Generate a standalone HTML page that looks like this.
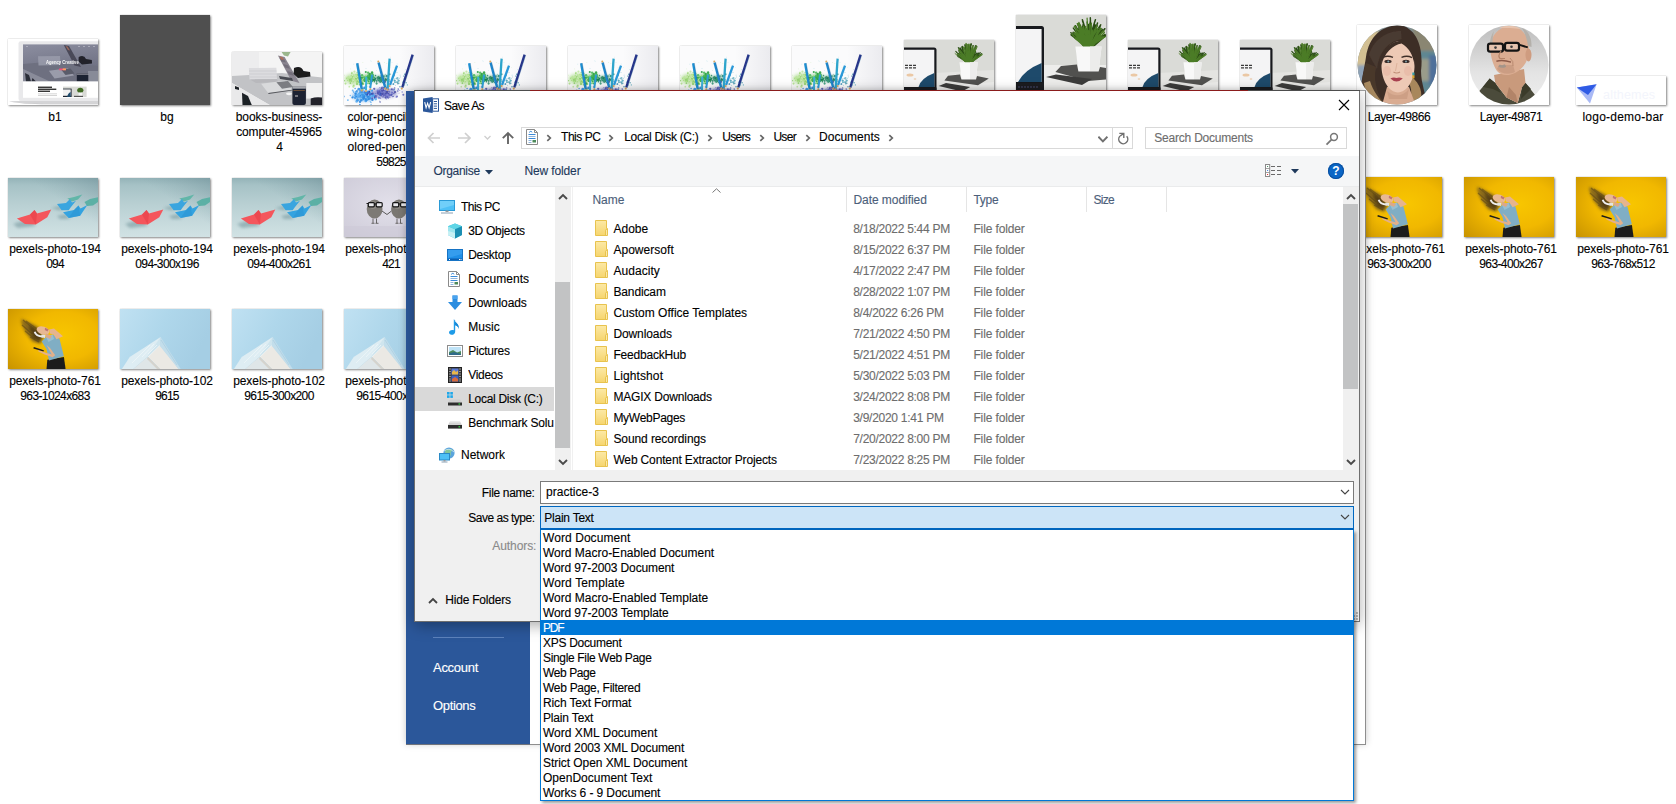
<!DOCTYPE html><html><head><meta charset="utf-8"><title>Save As</title><style>

html,body{margin:0;padding:0}
body{width:1676px;height:804px;overflow:hidden;background:#fff;position:relative;font-family:"Liberation Sans", sans-serif;font-size:12px;color:#000;line-height:15px}
.a{position:absolute}
.th{position:absolute;box-shadow:1px 1px 2px rgba(0,0,0,.45),0 0 1px rgba(0,0,0,.25);background:#fff;overflow:hidden}
.th svg{display:block;width:100%;height:100%}
.lb{position:absolute;width:130px;text-align:center;line-height:15px;font-size:12px;white-space:nowrap}
.lb span{display:inline-block}
.t{position:absolute;white-space:nowrap;line-height:15px;height:15px;-webkit-text-stroke:0.12px}
.lb{-webkit-text-stroke:0.12px}
#lst{-webkit-text-stroke:0.12px}
.g{color:#6d6d6d}
.hd{color:#4c607a}
#lst{position:absolute;left:540px;top:530px;width:812px;height:270px;background:#fff;border:1px solid #0078d7;border-top:0;box-shadow:2px 2px 3px rgba(0,0,0,.4)}
#lst div{position:absolute;left:0;width:810px;height:15px;line-height:15px;padding-left:2px;white-space:nowrap}

</style></head><body>
<svg width="0" height="0" style="position:absolute"><defs>

<linearGradient id="gBoat" x1="0" y1="0" x2="0" y2="1"><stop offset="0" stop-color="#94b3b8"/><stop offset=".12" stop-color="#a6c2c6"/><stop offset=".45" stop-color="#b9d0d3"/><stop offset="1" stop-color="#d1e2e4"/></linearGradient>
<linearGradient id="gBoat2" x1="0" y1="1" x2="1" y2="0"><stop offset="0" stop-color="#7fa0a8" stop-opacity="0"/><stop offset=".6" stop-color="#7fa0a8" stop-opacity="0"/><stop offset="1" stop-color="#6f9098" stop-opacity=".55"/></linearGradient>
<radialGradient id="gYel" cx=".6" cy=".45" r=".8"><stop offset="0" stop-color="#f8c600"/><stop offset=".5" stop-color="#f1b800"/><stop offset="1" stop-color="#c99400"/></radialGradient>
<linearGradient id="gSky" x1="0" y1="0" x2="1" y2=".35"><stop offset="0" stop-color="#c0e1f2"/><stop offset=".5" stop-color="#afd7eb"/><stop offset="1" stop-color="#a5cee4"/></linearGradient>
<radialGradient id="gStone" cx=".5" cy=".45" r=".7"><stop offset="0" stop-color="#e2e0ea"/><stop offset="1" stop-color="#cfccd9"/></radialGradient>
<linearGradient id="gMan" x1="0" y1="0" x2="0" y2="1"><stop offset="0" stop-color="#bcbcbc"/><stop offset=".6" stop-color="#e4e4e4"/><stop offset="1" stop-color="#efefef"/></linearGradient>
<linearGradient id="gHero" x1="0" y1="0" x2=".3" y2="1"><stop offset="0" stop-color="#8c8ea0"/><stop offset="1" stop-color="#6a6c7e"/></linearGradient>
<linearGradient id="gFold" x1="0" y1="0" x2="0" y2="1"><stop offset="0" stop-color="#fce9a6"/><stop offset="1" stop-color="#f6d56e"/></linearGradient>
<linearGradient id="gPenR" x1="0" y1="0" x2="1" y2="0"><stop offset="0" stop-color="#fbfbfc"/><stop offset="1" stop-color="#ebebef"/></linearGradient>
<clipPath id="cW"><circle cx="40" cy="40" r="39.5"/></clipPath>
<filter id="bl0" x="-10%" y="-10%" width="120%" height="120%"><feGaussianBlur stdDeviation="0.35"/></filter>
<filter id="bl1" x="-20%" y="-20%" width="140%" height="140%"><feGaussianBlur stdDeviation="0.6"/></filter>
<filter id="bl2" x="-20%" y="-20%" width="140%" height="140%"><feGaussianBlur stdDeviation="1.4"/></filter>
<filter id="bl3" x="-30%" y="-30%" width="160%" height="160%"><feGaussianBlur stdDeviation="2.5"/></filter>

<g id="b1">
 <rect width="90" height="66" fill="#fff"/>
 <path d="M10.5 4.5Q10.5 2.3 12.7 2.3H90V62H12.7Q10.5 62 10.5 59.8Z" fill="#e9e9eb"/>
  <rect x="15" y="5.4" width="75" height="37" fill="url(#gHero)"/>
 <g filter="url(#bl1)">
  <path d="M15 25L50 22L90 27V42.4H42L15 30Z" fill="#6e7080"/>
  <path d="M15 30L42 42.4H15Z" fill="#8a8c9a"/>
  <path d="M17 34L21 36L23 42.4H18Z" fill="#2c2d38"/>
  <path d="M24.5 39L28 42.4H23.5Z" fill="#2c2d38"/>
  <path d="M30 17.3L52 17L52.5 26L30.5 26.4Z" fill="#9a9cac" opacity=".85"/>
  <path d="M55.8 6L61 7L73 28L66.5 26.5Z" fill="#4a4858"/>
  <path d="M57.5 7L59.5 7.4L62 11.5L60 11Z" fill="#b0705c" opacity=".8"/>
  <path d="M40.9 31.7L60 29.2L66 36.5L46.5 39.5Z" fill="#9a9caa"/>
  <path d="M53 30.5L62.5 29.4L66.5 34.4L57.5 36Z" fill="#5a5c6a"/>
  <path d="M70.7 18Q76 15.5 78 20L83.8 21L84 24.5L74 25.5L70.5 22.5Z" fill="#20212a"/>
  <path d="M68.8 34.5H81V42.4H68.8Z" fill="#1f2230"/>
  <rect x="68.8" y="34.5" width="12.2" height="1.4" fill="#7a7c88"/>
  <rect x="80" y="32" width="10" height="10.4" fill="#9a9ca8" opacity=".6"/>
 </g>
 <rect x="15" y="42.4" width="75" height="16.4" fill="#fff"/>
 <rect x="30" y="47.6" width="14" height="1.3" fill="#222"/><rect x="30" y="49.6" width="18.3" height="1.3" fill="#222"/><rect x="30" y="51.6" width="12" height="1.3" fill="#222"/>
 <rect x="30" y="54.6" width="19" height=".6" fill="#b8b8b8"/><rect x="30" y="56.2" width="19" height=".6" fill="#b8b8b8"/>
 <rect x="55" y="47.6" width="23.6" height="10.4" fill="#d9dad6"/>
 <rect x="55" y="49.6" width="8.6" height="8.4" fill="#1d2430"/><rect x="55" y="50.4" width="7.7" height="6.4" fill="#f1f1f1"/>
 <path d="M59 58Q60 54 62.7 53V58Z" fill="#1e4a6b"/>
 <ellipse cx="72.3" cy="51.3" rx="3.1" ry="2.5" fill="#3f6a22"/><rect x="70.6" y="53.6" width="3.6" height="3.8" fill="#f5f5f5"/>
 <rect x="66" y="56.8" width="9" height="1.2" fill="#555"/>
 <rect x="51" y="29.4" width="7" height="1.8" rx=".5" fill="#ee4f7e"/><rect x="54.6" y="29.4" width="3.4" height="1.8" rx=".5" fill="#f7a45c"/>
 <text x="54.4" y="25" font-family="Liberation Sans, sans-serif" font-size="5" font-weight="bold" fill="#fff" text-anchor="middle" textLength="32.7" lengthAdjust="spacingAndGlyphs" opacity=".95">Agency Creative</text>
 <g fill="#c8c9d2" opacity=".7"><rect x="18" y="7.2" width="2" height=".8"/><rect x="70" y="7.2" width="2" height=".8"/><rect x="75" y="7.2" width="2" height=".8"/><rect x="80" y="7.2" width="2" height=".8"/><rect x="85" y="7.2" width="2" height=".8"/></g>
 <path d="M1 62.2Q12 64.4 45 64.4H90V62H10.5Z" fill="#d4d4d6"/>
 <path d="M1 62.2Q12 64.4 45 64.4H90V65.2H40Q12 65.2 1 62.2Z" fill="#bdbdc0"/>
</g>

<g id="bg"><rect width="90" height="90" fill="#4f4f4f"/></g>

<g id="books">
 <rect width="90" height="53" fill="#f4f4f4"/>
 <rect x="0" y="0" width="27" height="24" fill="#ededee"/>
 <g filter="url(#bl0)">
 <path d="M0 23.9L50 21L90 25.5V53H37.7L0 31Z" fill="#c2c3c6"/>
 <path d="M0 31L37.7 53H0Z" fill="#e9e9ea"/>
 <path d="M10 40.7L16 44L19.8 53H10.5Z" fill="#1e2026"/>
 <path d="M3 34L7 35.5V38L3 37Z" fill="#1e2026"/>
 <path d="M16.8 16L44.4 15.7L45 27L17.5 27.4Z" fill="#dcdcdf"/>
 <path d="M17 19H44.6M17.2 22H44.8M17.4 25H45" stroke="#c9c9cd" stroke-width=".7"/>
 <path d="M18 27.4L45 27L46 30L24 31Z" fill="#b3b4b8" opacity=".7"/>
 <path d="M49.6 0L58.6 0L56 4.5L52 3.5Z" fill="#86a873" opacity=".8"/>
 <path d="M45.9 3.4L52.6 4.9L67.5 31L59.3 28.7Z" fill="#8a8590"/>
 <path d="M47.5 6L52 7L54 10.5L49.5 9.5ZM51 12L56 13.2L58 16.7L53 15.5ZM55 19L60 20.2L62 23.7L57 22.5Z" fill="#6d6874" opacity=".8"/>
 <path d="M47.5 4.4L50.5 5L52 8L49 7.4Z" fill="#b86a50" opacity=".8"/>
 <path d="M29.1 31.7L52.6 28.7L60 37.7L36.2 41Z" fill="#d9dadc"/>
 <path d="M44.4 30.2L56 28.9L61 35L50 36.8Z" fill="#7b7d82"/>
 <path d="M36.2 41L60 37.7L60 38.6L36.6 42Z" fill="#55575c"/>
 <path d="M47 24L60 26L61 29L48 27Z" fill="#4a4c52"/>
 <path d="M62 16Q69 13 71.5 19L78 20L78.5 24.5L66 26L61.6 22Z" fill="#1a1b1f"/>
 <rect x="74.3" y="31" width="15.7" height="15.6" fill="#f1f1f1"/>
 <path d="M60.4 34.7H73.9V51Q73.9 53 72 53H62.3Q60.4 53 60.4 51Z" fill="#1c2230"/>
 <rect x="60.4" y="34.7" width="13.5" height="2" fill="#a8aab0"/>
 <rect x="61.4" y="38" width="11.5" height="1" fill="#7a5a3a" opacity=".8"/>
 <rect x="63" y="43.2" width="3" height="1.6" fill="#8a8c92"/>
 <ellipse cx="57" cy="41.8" rx="3" ry="1.4" fill="#f4f4f4"/>
 <path d="M78.7 46.5Q84 44.5 90 45.5V53H78.7Z" fill="#23242c"/>
 </g>
</g>

<g id="pencils">
 <rect width="90" height="59" fill="#fbfbfc"/>
 <rect x="55" y="0" width="35" height="59" fill="url(#gPenR)"/>
 <g filter="url(#bl1)">
<g filter="url(#bl2)" opacity=".45"><ellipse cx="11" cy="33" rx="11" ry="6" fill="#8fd064"/><ellipse cx="25" cy="32" rx="7" ry="4.5" fill="#2da844"/><ellipse cx="37" cy="33" rx="7" ry="3.5" fill="#167a5a"/><ellipse cx="20" cy="50" rx="12" ry="5.5" fill="#2d8fe6"/><ellipse cx="40" cy="47" rx="13" ry="5" fill="#3a3fa8"/></g><g opacity="0.75"><circle cx="19.4" cy="38.1" r="0.93" fill="#7cc653"/><circle cx="19.1" cy="37.0" r="0.73" fill="#b9e596"/><circle cx="11.7" cy="31.5" r="0.42" fill="#b9e596"/><circle cx="1.0" cy="35.4" r="0.40" fill="#b9e596"/><circle cx="9.8" cy="39.3" r="0.81" fill="#8fd064"/><circle cx="12.3" cy="32.5" r="0.42" fill="#8fd064"/><circle cx="16.9" cy="31.7" r="0.55" fill="#b9e596"/><circle cx="9.8" cy="28.8" r="0.93" fill="#b9e596"/><circle cx="5.3" cy="31.9" r="0.87" fill="#b9e596"/><circle cx="25.2" cy="30.6" r="0.69" fill="#8fd064"/><circle cx="19.0" cy="43.1" r="1.00" fill="#8fd064"/><circle cx="10.4" cy="25.6" r="1.08" fill="#b9e596"/><circle cx="-3.3" cy="32.6" r="0.53" fill="#7cc653"/><circle cx="-0.5" cy="29.2" r="0.99" fill="#b9e596"/><circle cx="9.5" cy="32.5" r="0.57" fill="#b9e596"/><circle cx="7.6" cy="34.1" r="0.78" fill="#7cc653"/><circle cx="19.2" cy="35.7" r="0.48" fill="#a6dc7c"/><circle cx="4.6" cy="32.5" r="0.74" fill="#8fd064"/><circle cx="5.5" cy="33.6" r="0.99" fill="#b9e596"/><circle cx="8.6" cy="31.3" r="0.56" fill="#8fd064"/><circle cx="12.0" cy="28.7" r="1.00" fill="#a6dc7c"/><circle cx="6.1" cy="34.8" r="0.99" fill="#7cc653"/><circle cx="6.0" cy="33.7" r="0.78" fill="#8fd064"/><circle cx="1.5" cy="37.6" r="1.07" fill="#a6dc7c"/><circle cx="2.7" cy="32.5" r="0.70" fill="#8fd064"/><circle cx="4.9" cy="33.4" r="0.79" fill="#b9e596"/><circle cx="4.9" cy="33.3" r="0.64" fill="#7cc653"/><circle cx="9.5" cy="33.2" r="0.56" fill="#a6dc7c"/><circle cx="7.1" cy="32.3" r="0.46" fill="#7cc653"/><circle cx="26.3" cy="34.7" r="0.45" fill="#8fd064"/><circle cx="0.6" cy="34.7" r="0.60" fill="#7cc653"/><circle cx="18.0" cy="36.1" r="0.64" fill="#8fd064"/><circle cx="13.5" cy="35.3" r="1.07" fill="#7cc653"/><circle cx="7.8" cy="30.7" r="0.89" fill="#b9e596"/><circle cx="9.6" cy="33.1" r="0.67" fill="#b9e596"/><circle cx="12.4" cy="30.4" r="0.58" fill="#a6dc7c"/><circle cx="17.7" cy="32.2" r="1.08" fill="#a6dc7c"/><circle cx="14.6" cy="33.2" r="0.90" fill="#a6dc7c"/><circle cx="3.7" cy="34.4" r="0.70" fill="#a6dc7c"/><circle cx="20.1" cy="32.3" r="0.89" fill="#b9e596"/><circle cx="12.6" cy="38.0" r="0.68" fill="#7cc653"/><circle cx="7.3" cy="29.9" r="0.92" fill="#a6dc7c"/><circle cx="24.0" cy="31.6" r="0.61" fill="#8fd064"/><circle cx="5.3" cy="40.7" r="0.92" fill="#b9e596"/><circle cx="7.8" cy="32.3" r="0.79" fill="#8fd064"/><circle cx="7.2" cy="31.7" r="1.03" fill="#b9e596"/><circle cx="17.2" cy="39.2" r="1.08" fill="#8fd064"/><circle cx="6.7" cy="35.2" r="0.54" fill="#b9e596"/><circle cx="4.6" cy="30.8" r="1.06" fill="#b9e596"/><circle cx="8.8" cy="36.9" r="0.63" fill="#b9e596"/><circle cx="12.0" cy="32.6" r="0.54" fill="#7cc653"/><circle cx="14.1" cy="28.8" r="0.49" fill="#b9e596"/><circle cx="13.2" cy="38.1" r="0.99" fill="#7cc653"/><circle cx="21.6" cy="29.6" r="0.77" fill="#a6dc7c"/><circle cx="12.7" cy="33.4" r="0.49" fill="#a6dc7c"/><circle cx="14.8" cy="31.7" r="0.93" fill="#7cc653"/><circle cx="7.0" cy="35.4" r="0.60" fill="#b9e596"/><circle cx="16.4" cy="36.3" r="0.47" fill="#8fd064"/><circle cx="5.7" cy="34.9" r="1.09" fill="#a6dc7c"/><circle cx="13.8" cy="30.2" r="0.83" fill="#b9e596"/><circle cx="18.3" cy="35.0" r="0.80" fill="#7cc653"/><circle cx="7.4" cy="35.2" r="0.77" fill="#8fd064"/><circle cx="5.9" cy="33.7" r="0.95" fill="#7cc653"/><circle cx="20.7" cy="33.4" r="0.46" fill="#8fd064"/><circle cx="16.3" cy="27.5" r="0.53" fill="#b9e596"/><circle cx="14.7" cy="36.3" r="0.88" fill="#a6dc7c"/><circle cx="10.9" cy="31.4" r="1.04" fill="#b9e596"/><circle cx="13.8" cy="28.9" r="0.97" fill="#7cc653"/><circle cx="9.7" cy="30.0" r="0.55" fill="#7cc653"/><circle cx="11.9" cy="33.1" r="1.09" fill="#7cc653"/><circle cx="10.2" cy="30.0" r="0.67" fill="#b9e596"/><circle cx="24.3" cy="36.0" r="1.08" fill="#b9e596"/><circle cx="14.5" cy="34.6" r="0.83" fill="#b9e596"/><circle cx="8.4" cy="30.7" r="0.78" fill="#7cc653"/><circle cx="12.9" cy="36.1" r="0.97" fill="#8fd064"/><circle cx="18.0" cy="32.6" r="0.86" fill="#7cc653"/><circle cx="17.0" cy="31.7" r="0.61" fill="#7cc653"/><circle cx="15.5" cy="38.7" r="0.81" fill="#7cc653"/><circle cx="11.1" cy="34.6" r="0.83" fill="#8fd064"/><circle cx="11.0" cy="33.7" r="0.57" fill="#8fd064"/><circle cx="9.5" cy="40.0" r="0.91" fill="#8fd064"/><circle cx="7.4" cy="30.8" r="0.95" fill="#b9e596"/><circle cx="-1.6" cy="34.3" r="0.47" fill="#7cc653"/><circle cx="25.0" cy="37.0" r="0.52" fill="#a6dc7c"/><circle cx="23.0" cy="32.4" r="0.62" fill="#8fd064"/><circle cx="7.9" cy="26.6" r="0.82" fill="#a6dc7c"/><circle cx="13.8" cy="31.8" r="1.04" fill="#8fd064"/><circle cx="13.2" cy="26.6" r="0.84" fill="#a6dc7c"/><circle cx="14.0" cy="36.4" r="0.51" fill="#a6dc7c"/><circle cx="11.0" cy="34.3" r="1.07" fill="#b9e596"/><circle cx="3.3" cy="31.7" r="1.00" fill="#b9e596"/><circle cx="23.3" cy="33.5" r="0.52" fill="#b9e596"/><circle cx="20.3" cy="33.8" r="0.69" fill="#8fd064"/><circle cx="16.6" cy="34.3" r="0.50" fill="#a6dc7c"/><circle cx="23.0" cy="40.6" r="0.59" fill="#b9e596"/><circle cx="12.3" cy="34.3" r="0.74" fill="#a6dc7c"/><circle cx="3.5" cy="32.3" r="0.85" fill="#b9e596"/><circle cx="19.4" cy="30.9" r="0.56" fill="#7cc653"/><circle cx="3.6" cy="33.1" r="0.56" fill="#b9e596"/><circle cx="6.4" cy="37.1" r="0.91" fill="#7cc653"/><circle cx="15.5" cy="32.6" r="1.05" fill="#7cc653"/><circle cx="17.0" cy="38.0" r="1.02" fill="#7cc653"/><circle cx="9.3" cy="35.8" r="0.79" fill="#a6dc7c"/><circle cx="7.8" cy="27.6" r="0.82" fill="#8fd064"/><circle cx="24.1" cy="27.6" r="0.80" fill="#a6dc7c"/><circle cx="14.8" cy="36.1" r="1.06" fill="#8fd064"/><circle cx="4.5" cy="33.1" r="0.85" fill="#b9e596"/><circle cx="7.1" cy="32.8" r="0.91" fill="#8fd064"/><circle cx="8.2" cy="32.8" r="0.58" fill="#8fd064"/><circle cx="9.4" cy="40.7" r="1.07" fill="#a6dc7c"/></g><g opacity="0.85"><circle cx="34.4" cy="30.3" r="0.55" fill="#2da844"/><circle cx="23.4" cy="33.2" r="1.15" fill="#1f9a3a"/><circle cx="25.0" cy="33.7" r="0.53" fill="#46b85a"/><circle cx="27.3" cy="34.2" r="0.81" fill="#46b85a"/><circle cx="28.0" cy="29.7" r="0.80" fill="#1f9a3a"/><circle cx="16.4" cy="31.9" r="1.20" fill="#1f9a3a"/><circle cx="21.6" cy="32.5" r="0.80" fill="#46b85a"/><circle cx="26.3" cy="33.3" r="0.68" fill="#2da844"/><circle cx="24.0" cy="33.2" r="0.91" fill="#46b85a"/><circle cx="23.8" cy="30.6" r="1.21" fill="#1f9a3a"/><circle cx="24.1" cy="26.6" r="1.11" fill="#46b85a"/><circle cx="18.2" cy="37.6" r="1.27" fill="#2da844"/><circle cx="28.9" cy="31.3" r="1.09" fill="#46b85a"/><circle cx="20.4" cy="31.4" r="1.24" fill="#46b85a"/><circle cx="17.9" cy="31.6" r="1.03" fill="#1f9a3a"/><circle cx="28.6" cy="30.4" r="0.95" fill="#46b85a"/><circle cx="24.2" cy="29.2" r="0.68" fill="#1f9a3a"/><circle cx="28.0" cy="27.6" r="1.20" fill="#46b85a"/><circle cx="24.0" cy="37.5" r="0.75" fill="#46b85a"/><circle cx="27.5" cy="29.2" r="0.91" fill="#46b85a"/><circle cx="22.1" cy="30.9" r="0.67" fill="#46b85a"/><circle cx="20.9" cy="34.8" r="1.21" fill="#1f9a3a"/><circle cx="23.7" cy="26.6" r="0.65" fill="#46b85a"/><circle cx="29.1" cy="34.0" r="0.54" fill="#46b85a"/><circle cx="26.2" cy="37.0" r="0.59" fill="#46b85a"/><circle cx="27.1" cy="33.5" r="1.16" fill="#2da844"/><circle cx="19.4" cy="33.8" r="0.53" fill="#1f9a3a"/><circle cx="23.1" cy="33.5" r="0.52" fill="#2da844"/><circle cx="25.9" cy="31.8" r="1.08" fill="#2da844"/><circle cx="23.5" cy="32.9" r="1.25" fill="#46b85a"/><circle cx="27.5" cy="35.5" r="0.81" fill="#2da844"/><circle cx="25.8" cy="30.2" r="1.28" fill="#2da844"/><circle cx="21.9" cy="34.9" r="1.09" fill="#2da844"/><circle cx="24.0" cy="34.8" r="0.75" fill="#46b85a"/><circle cx="25.7" cy="27.9" r="1.22" fill="#1f9a3a"/><circle cx="29.1" cy="29.0" r="0.88" fill="#2da844"/><circle cx="30.1" cy="34.1" r="1.17" fill="#2da844"/><circle cx="17.3" cy="33.6" r="0.60" fill="#46b85a"/><circle cx="25.9" cy="29.2" r="0.76" fill="#1f9a3a"/><circle cx="24.7" cy="35.4" r="0.84" fill="#2da844"/><circle cx="21.8" cy="26.0" r="1.04" fill="#1f9a3a"/><circle cx="27.3" cy="32.3" r="0.58" fill="#46b85a"/><circle cx="26.0" cy="37.5" r="1.07" fill="#2da844"/><circle cx="27.9" cy="31.9" r="0.86" fill="#1f9a3a"/><circle cx="27.5" cy="32.9" r="1.13" fill="#46b85a"/><circle cx="24.2" cy="30.1" r="0.84" fill="#46b85a"/><circle cx="25.0" cy="30.6" r="0.81" fill="#2da844"/><circle cx="29.9" cy="34.6" r="0.69" fill="#2da844"/><circle cx="31.6" cy="32.5" r="0.58" fill="#2da844"/><circle cx="20.6" cy="31.6" r="0.75" fill="#46b85a"/><circle cx="20.6" cy="34.6" r="1.11" fill="#2da844"/><circle cx="24.4" cy="29.4" r="0.91" fill="#46b85a"/><circle cx="18.1" cy="29.2" r="1.24" fill="#46b85a"/><circle cx="25.7" cy="33.0" r="1.14" fill="#1f9a3a"/><circle cx="35.1" cy="32.8" r="0.59" fill="#1f9a3a"/><circle cx="22.2" cy="38.9" r="0.80" fill="#2da844"/><circle cx="27.9" cy="30.2" r="0.58" fill="#2da844"/><circle cx="28.2" cy="28.9" r="0.51" fill="#1f9a3a"/><circle cx="30.3" cy="33.3" r="0.87" fill="#46b85a"/><circle cx="24.7" cy="31.8" r="0.52" fill="#1f9a3a"/><circle cx="26.5" cy="31.6" r="1.10" fill="#2da844"/><circle cx="27.9" cy="33.6" r="1.07" fill="#2da844"/><circle cx="25.1" cy="29.5" r="0.60" fill="#2da844"/><circle cx="29.0" cy="34.4" r="0.77" fill="#1f9a3a"/><circle cx="30.9" cy="31.0" r="0.52" fill="#46b85a"/><circle cx="23.8" cy="32.1" r="1.06" fill="#1f9a3a"/><circle cx="22.2" cy="34.2" r="1.14" fill="#1f9a3a"/><circle cx="17.0" cy="32.5" r="1.08" fill="#46b85a"/><circle cx="28.1" cy="26.5" r="1.17" fill="#1f9a3a"/><circle cx="23.2" cy="32.9" r="0.98" fill="#46b85a"/></g><g opacity="0.8"><circle cx="37.4" cy="35.5" r="0.70" fill="#0f6e50"/><circle cx="31.1" cy="33.4" r="0.88" fill="#1e8c68"/><circle cx="36.8" cy="34.5" r="1.20" fill="#1e8c68"/><circle cx="31.5" cy="32.4" r="0.72" fill="#167a5a"/><circle cx="37.3" cy="34.1" r="1.14" fill="#1e8c68"/><circle cx="36.6" cy="30.0" r="0.45" fill="#0f6e50"/><circle cx="44.6" cy="33.9" r="1.06" fill="#1e8c68"/><circle cx="29.9" cy="33.5" r="1.10" fill="#0f6e50"/><circle cx="38.1" cy="30.9" r="0.98" fill="#0f6e50"/><circle cx="27.1" cy="34.6" r="1.10" fill="#167a5a"/><circle cx="42.1" cy="33.5" r="0.61" fill="#0f6e50"/><circle cx="31.2" cy="34.1" r="0.64" fill="#0f6e50"/><circle cx="39.9" cy="30.7" r="0.83" fill="#1e8c68"/><circle cx="28.6" cy="30.8" r="0.95" fill="#167a5a"/><circle cx="45.6" cy="28.2" r="0.94" fill="#167a5a"/><circle cx="35.7" cy="31.3" r="0.83" fill="#0f6e50"/><circle cx="30.5" cy="31.7" r="0.57" fill="#0f6e50"/><circle cx="36.8" cy="34.0" r="0.79" fill="#0f6e50"/><circle cx="38.9" cy="32.9" r="1.04" fill="#1e8c68"/><circle cx="37.7" cy="32.8" r="0.74" fill="#1e8c68"/><circle cx="37.9" cy="32.6" r="0.89" fill="#167a5a"/><circle cx="32.7" cy="34.8" r="0.84" fill="#1e8c68"/><circle cx="20.8" cy="32.8" r="0.65" fill="#167a5a"/><circle cx="41.3" cy="34.6" r="1.16" fill="#1e8c68"/><circle cx="36.1" cy="34.5" r="0.95" fill="#1e8c68"/><circle cx="32.6" cy="37.6" r="1.12" fill="#1e8c68"/><circle cx="30.5" cy="35.8" r="0.71" fill="#0f6e50"/><circle cx="36.1" cy="32.2" r="1.18" fill="#0f6e50"/><circle cx="36.1" cy="35.8" r="0.97" fill="#1e8c68"/><circle cx="33.8" cy="33.6" r="0.64" fill="#1e8c68"/><circle cx="41.6" cy="33.1" r="0.86" fill="#167a5a"/><circle cx="32.7" cy="34.9" r="0.51" fill="#0f6e50"/><circle cx="33.5" cy="31.4" r="0.94" fill="#1e8c68"/><circle cx="34.2" cy="32.0" r="0.79" fill="#0f6e50"/><circle cx="43.3" cy="34.1" r="1.17" fill="#1e8c68"/><circle cx="34.4" cy="31.8" r="0.88" fill="#167a5a"/><circle cx="34.4" cy="34.3" r="0.70" fill="#0f6e50"/><circle cx="36.3" cy="36.5" r="0.48" fill="#167a5a"/><circle cx="43.7" cy="32.5" r="0.51" fill="#0f6e50"/><circle cx="38.4" cy="36.6" r="0.59" fill="#167a5a"/><circle cx="34.2" cy="30.4" r="0.48" fill="#0f6e50"/><circle cx="35.2" cy="34.6" r="1.07" fill="#1e8c68"/><circle cx="41.2" cy="28.3" r="0.46" fill="#0f6e50"/><circle cx="31.5" cy="29.6" r="0.76" fill="#167a5a"/><circle cx="37.3" cy="32.5" r="1.17" fill="#1e8c68"/><circle cx="40.0" cy="29.4" r="0.55" fill="#1e8c68"/><circle cx="32.5" cy="36.2" r="0.47" fill="#0f6e50"/><circle cx="35.7" cy="33.9" r="0.63" fill="#1e8c68"/><circle cx="30.8" cy="33.6" r="0.63" fill="#0f6e50"/><circle cx="28.5" cy="35.4" r="0.52" fill="#167a5a"/><circle cx="28.6" cy="33.5" r="0.90" fill="#0f6e50"/><circle cx="26.9" cy="35.0" r="1.14" fill="#167a5a"/><circle cx="41.9" cy="33.4" r="1.00" fill="#0f6e50"/><circle cx="33.3" cy="32.8" r="0.67" fill="#167a5a"/><circle cx="42.7" cy="30.0" r="1.18" fill="#167a5a"/></g><g opacity="0.7"><circle cx="54.2" cy="35.4" r="0.57" fill="#1a8aa6"/><circle cx="54.7" cy="34.3" r="0.65" fill="#1a7a96"/><circle cx="56.1" cy="29.1" r="0.47" fill="#2a9ab6"/><circle cx="49.6" cy="38.0" r="0.80" fill="#1a7a96"/><circle cx="56.0" cy="40.7" r="0.81" fill="#1a7a96"/><circle cx="54.8" cy="32.1" r="0.52" fill="#2a9ab6"/><circle cx="60.8" cy="28.3" r="0.82" fill="#1a7a96"/><circle cx="58.7" cy="36.1" r="0.72" fill="#2a9ab6"/><circle cx="54.0" cy="36.3" r="0.50" fill="#2a9ab6"/><circle cx="54.3" cy="33.7" r="0.51" fill="#2a9ab6"/><circle cx="59.7" cy="30.1" r="0.63" fill="#1a7a96"/><circle cx="51.1" cy="35.1" r="0.60" fill="#1a8aa6"/><circle cx="51.5" cy="39.2" r="0.37" fill="#1a8aa6"/><circle cx="40.5" cy="36.4" r="0.64" fill="#2a9ab6"/><circle cx="50.4" cy="34.5" r="0.90" fill="#1a8aa6"/><circle cx="62.1" cy="36.7" r="0.70" fill="#1a7a96"/><circle cx="53.4" cy="36.8" r="0.76" fill="#1a7a96"/><circle cx="52.2" cy="32.5" r="0.53" fill="#1a8aa6"/><circle cx="53.2" cy="31.7" r="0.67" fill="#1a8aa6"/><circle cx="60.7" cy="38.9" r="0.51" fill="#1a8aa6"/><circle cx="60.0" cy="35.2" r="0.84" fill="#1a7a96"/><circle cx="53.0" cy="26.4" r="0.36" fill="#1a7a96"/><circle cx="53.0" cy="35.6" r="0.71" fill="#2a9ab6"/><circle cx="53.3" cy="32.9" r="0.69" fill="#1a7a96"/><circle cx="53.2" cy="36.2" r="0.68" fill="#1a8aa6"/><circle cx="53.7" cy="34.4" r="0.37" fill="#1a8aa6"/><circle cx="49.2" cy="38.1" r="0.90" fill="#2a9ab6"/><circle cx="63.3" cy="38.9" r="0.58" fill="#1a8aa6"/><circle cx="55.1" cy="34.7" r="0.76" fill="#2a9ab6"/><circle cx="53.0" cy="32.5" r="0.37" fill="#1a7a96"/><circle cx="50.9" cy="32.7" r="0.37" fill="#2a9ab6"/><circle cx="50.4" cy="43.8" r="0.71" fill="#1a8aa6"/><circle cx="51.1" cy="34.3" r="0.58" fill="#1a8aa6"/><circle cx="54.8" cy="37.2" r="0.71" fill="#1a7a96"/><circle cx="56.3" cy="30.9" r="0.37" fill="#1a7a96"/><circle cx="53.9" cy="37.7" r="0.77" fill="#1a7a96"/><circle cx="55.5" cy="32.8" r="0.38" fill="#1a7a96"/><circle cx="42.8" cy="30.3" r="0.57" fill="#2a9ab6"/><circle cx="50.0" cy="29.6" r="0.76" fill="#1a7a96"/><circle cx="50.8" cy="36.1" r="0.86" fill="#2a9ab6"/><circle cx="61.3" cy="30.0" r="0.54" fill="#2a9ab6"/><circle cx="45.5" cy="35.2" r="0.52" fill="#1a7a96"/><circle cx="48.3" cy="33.2" r="0.73" fill="#1a7a96"/><circle cx="51.9" cy="36.5" r="0.62" fill="#1a7a96"/><circle cx="59.8" cy="32.9" r="0.37" fill="#2a9ab6"/></g><g opacity="0.85"><circle cx="12.3" cy="46.0" r="1.22" fill="#2d8fe6"/><circle cx="26.0" cy="44.9" r="0.72" fill="#2d8fe6"/><circle cx="22.6" cy="49.0" r="0.92" fill="#3a9bee"/><circle cx="17.8" cy="51.1" r="0.72" fill="#3a9bee"/><circle cx="16.5" cy="51.2" r="1.28" fill="#5aaef2"/><circle cx="26.2" cy="55.3" r="0.62" fill="#5aaef2"/><circle cx="20.3" cy="50.1" r="1.28" fill="#3a9bee"/><circle cx="22.4" cy="41.2" r="0.65" fill="#3a9bee"/><circle cx="15.9" cy="58.7" r="0.99" fill="#3a9bee"/><circle cx="27.1" cy="58.4" r="0.68" fill="#5aaef2"/><circle cx="18.1" cy="53.2" r="0.65" fill="#3a9bee"/><circle cx="19.5" cy="53.1" r="1.24" fill="#2d8fe6"/><circle cx="11.6" cy="46.9" r="0.56" fill="#1f7fdc"/><circle cx="23.1" cy="46.4" r="0.78" fill="#5aaef2"/><circle cx="16.0" cy="50.4" r="0.73" fill="#2d8fe6"/><circle cx="25.8" cy="49.0" r="0.86" fill="#5aaef2"/><circle cx="14.3" cy="53.4" r="0.51" fill="#2d8fe6"/><circle cx="17.6" cy="45.3" r="1.36" fill="#2d8fe6"/><circle cx="20.5" cy="41.9" r="1.35" fill="#1f7fdc"/><circle cx="6.3" cy="49.4" r="0.73" fill="#5aaef2"/><circle cx="28.4" cy="53.7" r="1.22" fill="#1f7fdc"/><circle cx="35.3" cy="51.9" r="0.58" fill="#1f7fdc"/><circle cx="13.9" cy="49.7" r="0.63" fill="#1f7fdc"/><circle cx="27.3" cy="48.0" r="0.78" fill="#1f7fdc"/><circle cx="16.0" cy="55.9" r="1.06" fill="#1f7fdc"/><circle cx="23.9" cy="50.0" r="0.54" fill="#5aaef2"/><circle cx="30.5" cy="51.1" r="0.81" fill="#1f7fdc"/><circle cx="13.5" cy="51.0" r="0.55" fill="#2d8fe6"/><circle cx="21.9" cy="47.0" r="0.69" fill="#3a9bee"/><circle cx="12.2" cy="45.5" r="0.60" fill="#5aaef2"/><circle cx="18.4" cy="50.9" r="0.88" fill="#3a9bee"/><circle cx="-3.7" cy="53.9" r="1.27" fill="#5aaef2"/><circle cx="29.6" cy="48.7" r="0.79" fill="#1f7fdc"/><circle cx="18.3" cy="53.4" r="0.63" fill="#5aaef2"/><circle cx="23.5" cy="46.1" r="0.66" fill="#5aaef2"/><circle cx="22.8" cy="48.4" r="0.94" fill="#1f7fdc"/><circle cx="30.7" cy="52.4" r="0.82" fill="#2d8fe6"/><circle cx="20.4" cy="46.7" r="1.13" fill="#1f7fdc"/><circle cx="22.6" cy="47.6" r="1.38" fill="#1f7fdc"/><circle cx="25.7" cy="49.1" r="0.66" fill="#2d8fe6"/><circle cx="8.9" cy="51.0" r="0.79" fill="#1f7fdc"/><circle cx="8.4" cy="51.5" r="1.08" fill="#1f7fdc"/><circle cx="14.6" cy="54.1" r="1.16" fill="#5aaef2"/><circle cx="12.6" cy="55.4" r="1.28" fill="#5aaef2"/><circle cx="36.1" cy="48.7" r="0.97" fill="#3a9bee"/><circle cx="22.0" cy="53.1" r="1.27" fill="#1f7fdc"/><circle cx="16.3" cy="44.8" r="1.16" fill="#3a9bee"/><circle cx="8.7" cy="44.5" r="0.96" fill="#5aaef2"/><circle cx="17.3" cy="54.2" r="1.28" fill="#1f7fdc"/><circle cx="19.7" cy="49.2" r="0.64" fill="#5aaef2"/><circle cx="17.1" cy="48.4" r="1.18" fill="#3a9bee"/><circle cx="18.7" cy="49.3" r="0.92" fill="#3a9bee"/><circle cx="26.9" cy="56.4" r="0.60" fill="#3a9bee"/><circle cx="11.9" cy="50.5" r="0.87" fill="#1f7fdc"/><circle cx="13.5" cy="53.3" r="1.03" fill="#3a9bee"/><circle cx="18.7" cy="46.7" r="0.82" fill="#1f7fdc"/><circle cx="28.0" cy="44.5" r="1.12" fill="#1f7fdc"/><circle cx="28.0" cy="49.0" r="0.77" fill="#1f7fdc"/><circle cx="14.3" cy="49.1" r="1.02" fill="#1f7fdc"/><circle cx="22.8" cy="46.7" r="1.23" fill="#1f7fdc"/><circle cx="16.3" cy="50.4" r="0.84" fill="#5aaef2"/><circle cx="36.4" cy="47.6" r="1.05" fill="#1f7fdc"/><circle cx="24.1" cy="45.4" r="0.84" fill="#1f7fdc"/><circle cx="11.8" cy="48.1" r="0.63" fill="#5aaef2"/><circle cx="3.9" cy="54.1" r="0.94" fill="#5aaef2"/><circle cx="26.3" cy="49.4" r="1.37" fill="#3a9bee"/><circle cx="15.8" cy="48.5" r="1.38" fill="#5aaef2"/><circle cx="20.0" cy="50.7" r="1.35" fill="#1f7fdc"/><circle cx="14.7" cy="50.1" r="0.93" fill="#2d8fe6"/><circle cx="11.1" cy="42.5" r="0.72" fill="#2d8fe6"/><circle cx="22.4" cy="43.6" r="0.51" fill="#1f7fdc"/><circle cx="20.3" cy="54.0" r="0.53" fill="#5aaef2"/><circle cx="19.6" cy="52.0" r="1.39" fill="#1f7fdc"/><circle cx="-0.3" cy="50.5" r="0.97" fill="#2d8fe6"/><circle cx="23.4" cy="50.2" r="0.75" fill="#1f7fdc"/><circle cx="12.0" cy="46.3" r="0.52" fill="#1f7fdc"/><circle cx="13.1" cy="54.4" r="1.03" fill="#2d8fe6"/><circle cx="28.2" cy="50.1" r="1.12" fill="#2d8fe6"/><circle cx="26.2" cy="47.2" r="0.51" fill="#5aaef2"/><circle cx="11.8" cy="47.0" r="1.36" fill="#5aaef2"/><circle cx="27.9" cy="44.8" r="0.93" fill="#3a9bee"/><circle cx="25.9" cy="47.7" r="1.18" fill="#1f7fdc"/><circle cx="25.2" cy="45.4" r="0.89" fill="#1f7fdc"/><circle cx="15.6" cy="46.8" r="0.78" fill="#3a9bee"/><circle cx="11.9" cy="50.6" r="0.95" fill="#1f7fdc"/><circle cx="13.3" cy="49.1" r="0.99" fill="#2d8fe6"/><circle cx="24.3" cy="51.1" r="1.24" fill="#2d8fe6"/><circle cx="19.2" cy="49.3" r="1.15" fill="#2d8fe6"/><circle cx="30.1" cy="49.9" r="0.54" fill="#2d8fe6"/><circle cx="21.8" cy="54.9" r="1.36" fill="#3a9bee"/><circle cx="30.2" cy="49.8" r="0.89" fill="#3a9bee"/><circle cx="14.8" cy="47.7" r="0.65" fill="#3a9bee"/><circle cx="23.0" cy="50.5" r="0.84" fill="#2d8fe6"/><circle cx="18.4" cy="54.5" r="0.61" fill="#5aaef2"/><circle cx="22.5" cy="48.7" r="0.89" fill="#1f7fdc"/><circle cx="17.0" cy="46.3" r="0.82" fill="#1f7fdc"/><circle cx="23.0" cy="49.0" r="0.77" fill="#1f7fdc"/><circle cx="27.0" cy="47.6" r="1.06" fill="#1f7fdc"/><circle cx="24.4" cy="51.0" r="1.25" fill="#1f7fdc"/><circle cx="16.5" cy="49.8" r="0.71" fill="#1f7fdc"/><circle cx="13.8" cy="51.0" r="0.62" fill="#2d8fe6"/><circle cx="18.5" cy="48.8" r="1.10" fill="#2d8fe6"/><circle cx="25.0" cy="46.9" r="0.91" fill="#5aaef2"/><circle cx="25.3" cy="47.2" r="0.79" fill="#2d8fe6"/><circle cx="13.8" cy="49.1" r="1.26" fill="#5aaef2"/><circle cx="18.1" cy="47.7" r="0.60" fill="#5aaef2"/><circle cx="21.5" cy="48.3" r="1.06" fill="#1f7fdc"/><circle cx="22.8" cy="47.5" r="1.34" fill="#1f7fdc"/><circle cx="21.8" cy="46.7" r="1.15" fill="#1f7fdc"/><circle cx="13.0" cy="44.9" r="0.89" fill="#1f7fdc"/><circle cx="11.3" cy="49.5" r="1.02" fill="#3a9bee"/><circle cx="17.7" cy="51.0" r="0.53" fill="#3a9bee"/><circle cx="22.5" cy="53.8" r="1.34" fill="#1f7fdc"/><circle cx="27.3" cy="50.0" r="1.30" fill="#5aaef2"/><circle cx="16.8" cy="53.5" r="0.67" fill="#3a9bee"/><circle cx="31.8" cy="53.1" r="1.28" fill="#5aaef2"/><circle cx="22.9" cy="52.2" r="0.75" fill="#3a9bee"/><circle cx="20.0" cy="44.8" r="0.53" fill="#2d8fe6"/><circle cx="13.9" cy="54.8" r="0.78" fill="#2d8fe6"/><circle cx="16.3" cy="45.2" r="0.92" fill="#3a9bee"/><circle cx="27.1" cy="53.5" r="0.76" fill="#3a9bee"/><circle cx="19.5" cy="47.9" r="0.68" fill="#2d8fe6"/><circle cx="11.5" cy="47.7" r="1.06" fill="#1f7fdc"/><circle cx="18.2" cy="48.0" r="0.83" fill="#2d8fe6"/><circle cx="18.9" cy="44.5" r="0.65" fill="#3a9bee"/><circle cx="22.0" cy="52.1" r="0.54" fill="#5aaef2"/><circle cx="19.2" cy="47.2" r="0.92" fill="#5aaef2"/><circle cx="21.2" cy="46.5" r="0.54" fill="#1f7fdc"/><circle cx="29.6" cy="47.9" r="0.71" fill="#5aaef2"/><circle cx="26.1" cy="52.2" r="1.11" fill="#2d8fe6"/><circle cx="8.7" cy="50.1" r="0.54" fill="#5aaef2"/><circle cx="11.2" cy="51.7" r="1.29" fill="#3a9bee"/><circle cx="23.3" cy="53.8" r="0.86" fill="#3a9bee"/><circle cx="24.9" cy="51.5" r="0.60" fill="#3a9bee"/><circle cx="9.6" cy="46.0" r="0.69" fill="#2d8fe6"/><circle cx="14.3" cy="51.2" r="0.88" fill="#5aaef2"/><circle cx="16.6" cy="49.7" r="0.51" fill="#1f7fdc"/><circle cx="14.8" cy="43.2" r="1.40" fill="#2d8fe6"/><circle cx="24.8" cy="53.1" r="1.20" fill="#1f7fdc"/><circle cx="22.4" cy="47.3" r="0.62" fill="#2d8fe6"/></g><g opacity="0.75"><circle cx="44.0" cy="40.7" r="0.79" fill="#2f3498"/><circle cx="44.4" cy="47.5" r="0.87" fill="#2f3498"/><circle cx="39.3" cy="47.7" r="0.79" fill="#4a4fb8"/><circle cx="39.0" cy="43.4" r="0.83" fill="#3a3fa8"/><circle cx="43.6" cy="51.2" r="1.04" fill="#2f3498"/><circle cx="34.3" cy="42.9" r="0.47" fill="#6a70cc"/><circle cx="38.2" cy="48.3" r="1.04" fill="#2f3498"/><circle cx="36.7" cy="47.5" r="0.56" fill="#2f3498"/><circle cx="42.0" cy="47.6" r="1.12" fill="#2f3498"/><circle cx="24.9" cy="47.6" r="0.55" fill="#3a3fa8"/><circle cx="36.0" cy="45.0" r="0.74" fill="#2f3498"/><circle cx="37.1" cy="46.2" r="1.10" fill="#4a4fb8"/><circle cx="48.8" cy="50.5" r="0.65" fill="#4a4fb8"/><circle cx="35.9" cy="48.7" r="0.88" fill="#3a3fa8"/><circle cx="41.8" cy="49.0" r="0.92" fill="#2f3498"/><circle cx="33.1" cy="50.0" r="0.63" fill="#6a70cc"/><circle cx="47.9" cy="48.2" r="1.00" fill="#6a70cc"/><circle cx="47.1" cy="49.1" r="1.04" fill="#3a3fa8"/><circle cx="49.3" cy="43.7" r="1.11" fill="#6a70cc"/><circle cx="41.7" cy="43.7" r="0.46" fill="#6a70cc"/><circle cx="27.7" cy="48.0" r="0.73" fill="#3a3fa8"/><circle cx="44.3" cy="51.9" r="0.76" fill="#4a4fb8"/><circle cx="49.9" cy="47.5" r="0.60" fill="#2f3498"/><circle cx="43.6" cy="50.8" r="0.66" fill="#2f3498"/><circle cx="58.2" cy="46.1" r="0.74" fill="#6a70cc"/><circle cx="39.0" cy="50.9" r="0.78" fill="#4a4fb8"/><circle cx="38.3" cy="43.0" r="0.91" fill="#6a70cc"/><circle cx="34.8" cy="51.6" r="1.18" fill="#6a70cc"/><circle cx="37.8" cy="44.4" r="0.92" fill="#6a70cc"/><circle cx="39.4" cy="45.0" r="1.06" fill="#3a3fa8"/><circle cx="25.3" cy="40.7" r="0.55" fill="#3a3fa8"/><circle cx="36.8" cy="43.9" r="1.19" fill="#6a70cc"/><circle cx="41.7" cy="46.0" r="0.55" fill="#2f3498"/><circle cx="33.7" cy="44.6" r="1.03" fill="#6a70cc"/><circle cx="45.2" cy="48.2" r="0.70" fill="#4a4fb8"/><circle cx="37.5" cy="44.6" r="0.65" fill="#3a3fa8"/><circle cx="37.5" cy="45.9" r="0.48" fill="#6a70cc"/><circle cx="23.3" cy="48.7" r="0.90" fill="#4a4fb8"/><circle cx="26.5" cy="41.7" r="0.53" fill="#2f3498"/><circle cx="54.2" cy="42.9" r="0.76" fill="#3a3fa8"/><circle cx="41.1" cy="45.2" r="1.15" fill="#6a70cc"/><circle cx="31.5" cy="47.5" r="0.85" fill="#6a70cc"/><circle cx="39.3" cy="45.8" r="1.04" fill="#2f3498"/><circle cx="35.7" cy="55.1" r="0.47" fill="#2f3498"/><circle cx="36.1" cy="56.0" r="0.74" fill="#2f3498"/><circle cx="43.3" cy="47.3" r="1.05" fill="#4a4fb8"/><circle cx="38.0" cy="46.8" r="0.54" fill="#2f3498"/><circle cx="59.3" cy="48.7" r="0.99" fill="#4a4fb8"/><circle cx="37.8" cy="43.9" r="0.46" fill="#3a3fa8"/><circle cx="36.5" cy="48.1" r="0.99" fill="#3a3fa8"/><circle cx="45.2" cy="49.3" r="1.18" fill="#4a4fb8"/><circle cx="35.5" cy="46.7" r="0.63" fill="#4a4fb8"/><circle cx="24.4" cy="46.7" r="1.04" fill="#4a4fb8"/><circle cx="35.7" cy="41.8" r="0.50" fill="#4a4fb8"/><circle cx="41.2" cy="35.9" r="0.85" fill="#3a3fa8"/><circle cx="42.4" cy="42.6" r="0.55" fill="#2f3498"/><circle cx="46.0" cy="43.6" r="0.41" fill="#4a4fb8"/><circle cx="37.6" cy="42.1" r="1.04" fill="#2f3498"/><circle cx="39.3" cy="49.2" r="0.52" fill="#4a4fb8"/><circle cx="37.9" cy="47.8" r="0.43" fill="#3a3fa8"/><circle cx="49.5" cy="50.6" r="0.48" fill="#2f3498"/><circle cx="37.7" cy="46.3" r="0.58" fill="#6a70cc"/><circle cx="41.6" cy="51.5" r="1.14" fill="#2f3498"/><circle cx="42.7" cy="47.8" r="0.86" fill="#3a3fa8"/><circle cx="45.8" cy="51.5" r="0.50" fill="#3a3fa8"/><circle cx="38.5" cy="44.9" r="0.95" fill="#3a3fa8"/><circle cx="40.0" cy="41.7" r="0.98" fill="#2f3498"/><circle cx="39.8" cy="49.5" r="1.05" fill="#4a4fb8"/><circle cx="39.8" cy="47.6" r="0.82" fill="#2f3498"/><circle cx="40.6" cy="45.5" r="0.88" fill="#3a3fa8"/><circle cx="32.1" cy="51.1" r="0.58" fill="#3a3fa8"/><circle cx="32.1" cy="51.1" r="0.67" fill="#3a3fa8"/><circle cx="38.9" cy="47.7" r="0.67" fill="#6a70cc"/><circle cx="55.0" cy="47.1" r="0.47" fill="#2f3498"/><circle cx="40.5" cy="48.8" r="0.84" fill="#4a4fb8"/><circle cx="47.8" cy="46.5" r="0.88" fill="#6a70cc"/><circle cx="45.5" cy="45.8" r="0.64" fill="#3a3fa8"/><circle cx="43.1" cy="50.6" r="1.05" fill="#3a3fa8"/><circle cx="53.8" cy="45.0" r="0.81" fill="#3a3fa8"/><circle cx="44.6" cy="49.9" r="0.79" fill="#6a70cc"/><circle cx="42.5" cy="51.9" r="0.71" fill="#6a70cc"/><circle cx="50.7" cy="42.0" r="0.67" fill="#2f3498"/><circle cx="37.2" cy="49.6" r="0.87" fill="#2f3498"/><circle cx="42.3" cy="53.0" r="0.54" fill="#6a70cc"/><circle cx="30.2" cy="42.8" r="1.14" fill="#3a3fa8"/><circle cx="42.8" cy="50.4" r="1.00" fill="#4a4fb8"/><circle cx="20.3" cy="45.9" r="0.82" fill="#6a70cc"/><circle cx="54.6" cy="43.6" r="0.66" fill="#6a70cc"/><circle cx="47.8" cy="43.2" r="1.04" fill="#3a3fa8"/><circle cx="39.8" cy="48.0" r="0.87" fill="#4a4fb8"/><circle cx="44.0" cy="43.2" r="1.03" fill="#3a3fa8"/><circle cx="53.0" cy="50.4" r="1.00" fill="#4a4fb8"/><circle cx="37.2" cy="48.7" r="0.98" fill="#4a4fb8"/><circle cx="42.3" cy="49.0" r="0.90" fill="#6a70cc"/><circle cx="39.4" cy="43.1" r="0.49" fill="#4a4fb8"/><circle cx="26.1" cy="48.7" r="0.86" fill="#4a4fb8"/><circle cx="51.0" cy="46.1" r="1.13" fill="#2f3498"/><circle cx="40.0" cy="45.8" r="0.92" fill="#6a70cc"/><circle cx="48.8" cy="46.8" r="0.45" fill="#2f3498"/><circle cx="42.9" cy="46.0" r="1.15" fill="#2f3498"/><circle cx="52.2" cy="51.0" r="0.70" fill="#4a4fb8"/><circle cx="30.7" cy="51.3" r="1.00" fill="#3a3fa8"/><circle cx="55.8" cy="44.5" r="0.52" fill="#6a70cc"/><circle cx="28.2" cy="52.3" r="1.15" fill="#4a4fb8"/><circle cx="36.0" cy="43.4" r="0.46" fill="#3a3fa8"/><circle cx="35.7" cy="48.4" r="0.83" fill="#4a4fb8"/><circle cx="34.3" cy="48.0" r="0.83" fill="#2f3498"/><circle cx="36.6" cy="52.1" r="0.62" fill="#3a3fa8"/><circle cx="33.9" cy="47.0" r="1.19" fill="#3a3fa8"/><circle cx="25.5" cy="45.9" r="0.85" fill="#2f3498"/><circle cx="41.0" cy="47.8" r="0.41" fill="#4a4fb8"/><circle cx="35.3" cy="46.0" r="0.62" fill="#2f3498"/><circle cx="38.2" cy="41.6" r="1.11" fill="#4a4fb8"/><circle cx="38.7" cy="44.9" r="0.40" fill="#2f3498"/><circle cx="33.4" cy="45.5" r="0.78" fill="#4a4fb8"/><circle cx="23.4" cy="48.1" r="0.90" fill="#3a3fa8"/><circle cx="38.1" cy="45.8" r="0.74" fill="#4a4fb8"/><circle cx="35.1" cy="45.2" r="0.91" fill="#3a3fa8"/><circle cx="28.6" cy="47.6" r="1.07" fill="#2f3498"/><circle cx="28.7" cy="46.3" r="0.69" fill="#6a70cc"/><circle cx="40.0" cy="45.4" r="1.01" fill="#6a70cc"/><circle cx="43.8" cy="45.7" r="0.62" fill="#2f3498"/><circle cx="49.3" cy="38.0" r="0.45" fill="#3a3fa8"/><circle cx="47.9" cy="48.4" r="0.47" fill="#2f3498"/><circle cx="38.3" cy="48.0" r="0.97" fill="#2f3498"/><circle cx="31.8" cy="50.0" r="1.08" fill="#3a3fa8"/><circle cx="39.6" cy="44.2" r="0.80" fill="#2f3498"/><circle cx="44.7" cy="45.4" r="0.41" fill="#3a3fa8"/><circle cx="41.6" cy="42.7" r="0.70" fill="#4a4fb8"/><circle cx="42.4" cy="42.1" r="1.09" fill="#3a3fa8"/></g><g opacity="0.6"><circle cx="36.2" cy="23.1" r="0.41" fill="#9ad67a"/><circle cx="42.9" cy="17.6" r="0.40" fill="#9ad67a"/><circle cx="55.6" cy="21.5" r="0.27" fill="#9ad67a"/><circle cx="35.0" cy="19.3" r="0.39" fill="#9ad67a"/><circle cx="26.5" cy="14.2" r="0.27" fill="#7cc8d8"/><circle cx="50.1" cy="21.3" r="0.39" fill="#9ad67a"/><circle cx="37.9" cy="23.2" r="0.28" fill="#7cc8d8"/><circle cx="18.9" cy="16.6" r="0.28" fill="#9ad67a"/><circle cx="26.9" cy="25.4" r="0.27" fill="#9ad67a"/><circle cx="27.1" cy="15.2" r="0.38" fill="#7cc8d8"/><circle cx="6.8" cy="22.9" r="0.34" fill="#9ad67a"/><circle cx="46.4" cy="11.1" r="0.31" fill="#7cc8d8"/><circle cx="9.8" cy="18.1" r="0.43" fill="#7cc8d8"/><circle cx="35.5" cy="18.5" r="0.38" fill="#9ad67a"/><circle cx="40.4" cy="16.6" r="0.37" fill="#9ad67a"/><circle cx="45.9" cy="19.4" r="0.39" fill="#7cc8d8"/><circle cx="32.5" cy="24.7" r="0.37" fill="#7cc8d8"/><circle cx="46.0" cy="21.1" r="0.32" fill="#9ad67a"/><circle cx="61.7" cy="23.5" r="0.41" fill="#7cc8d8"/><circle cx="36.8" cy="25.8" r="0.42" fill="#9ad67a"/><circle cx="53.1" cy="18.0" r="0.40" fill="#7cc8d8"/><circle cx="63.9" cy="23.7" r="0.28" fill="#9ad67a"/><circle cx="13.2" cy="28.0" r="0.37" fill="#9ad67a"/><circle cx="22.0" cy="22.4" r="0.47" fill="#7cc8d8"/><circle cx="48.0" cy="16.3" r="0.35" fill="#7cc8d8"/></g>
 </g>
 <g fill="none" filter="url(#bl0)">
  <path d="M13.1 17.2L17.7 43.5" stroke="#1e8fd2" stroke-width="2.3"/>
  <path d="M22.3 30.8L22 44" stroke="#3cb0da" stroke-width="2"/>
  <path d="M28.1 28.7L26.3 42.2" stroke="#2e9ed8" stroke-width="2"/>
  <path d="M34.5 16.5L41.1 41.5" stroke="#1f86cc" stroke-width="2.3"/>
  <path d="M45.6 12.7L43.6 42.6" stroke="#2fa5cc" stroke-width="2.3"/>
  <path d="M53 19.7L46 39" stroke="#2b98d8" stroke-width="2.3"/>
  <path d="M68.6 8.6L58.2 41.5" stroke="#27348a" stroke-width="2.3"/>
  <path d="M14.2 17L18.8 43.3M35.6 16.2L42.2 41.2M69.7 9L59.3 41.8" stroke="#0d4f86" stroke-width=".6" opacity=".5"/>
 </g>
 <g fill="#d8a662"><circle cx="17.8" cy="44.4" r="1.1"/><circle cx="22" cy="45" r="1"/><circle cx="26.2" cy="43.2" r="1"/><circle cx="41.3" cy="42.5" r="1.1"/><circle cx="43.5" cy="43.6" r="1.1"/><circle cx="45.7" cy="39.9" r="1"/><circle cx="57.8" cy="42.6" r="1.1"/><circle cx="34.3" cy="15.6" r="1"/></g>
</g>

<g id="laptop">
 <rect width="90" height="65" fill="#dadbd7"/>
 <path d="M0 34H90V65H0Z" fill="#ededeb"/>
 <path d="M30 33L90 30V42L30 47Z" fill="#e4e4e1"/>
 <path d="M0 7.5H30Q32.5 7.5 32.5 10V65H0Z" fill="#17191d"/>
 <path d="M0 9.8H30.3V47H0Z" fill="#f4f4f5"/>
 <path d="M14.5 47Q17 38 30.3 33V47Z" fill="#1e4a6b"/>
 <path d="M0 47.5H32.5V65H0Z" fill="#1c1d21"/>
 <path d="M1 25.3H4M5 25.3H8M9 25.3H12M1 27.8H4M5 27.8H8M9 27.8H12" stroke="#3a3a3a" stroke-width="1.3"/>
 <ellipse cx="6" cy="35" rx="3.5" ry="1.6" fill="#e8b98a" opacity=".75"/><ellipse cx="11" cy="39" rx="1.3" ry=".8" fill="#e8b98a" opacity=".7"/>
 <g filter="url(#bl0)"><path d="M66.6 23.5L62.8 6.4M62.9 23.5L64.8 5.7M62.5 23.5L69.3 5.5M65.5 23.5L52.7 12.7M64.6 23.5L58.0 15.7M62.2 23.5L57.3 13.6M64.3 23.5L64.5 4.8M63.4 23.5L59.7 11.4M66.2 23.5L71.6 11.6M62.0 23.5L77.1 14.0M66.9 23.5L74.3 14.5M65.9 23.5L53.5 14.1M62.5 23.5L56.3 15.1M64.8 23.5L71.2 13.8M63.1 23.5L55.3 14.1M63.1 23.5L51.8 11.4M63.5 23.5L71.5 12.2M66.8 23.5L60.5 8.5M62.9 23.5L67.5 3.8M63.2 23.5L76.3 12.6M64.1 23.5L74.7 13.0M65.0 23.5L56.1 7.8M62.3 23.5L54.7 10.7M65.1 23.5L66.9 3.7M62.1 23.5L72.9 16.1M62.9 23.5L63.1 11.2M65.5 23.5L76.2 15.5M66.3 23.5L61.3 4.7M65.7 23.5L70.8 10.9M64.4 23.5L53.3 15.5M64.9 23.5L73.5 14.3M63.4 23.5L72.5 6.0M63.1 23.5L63.1 9.1M62.4 23.5L74.9 16.4M65.5 23.5L71.5 16.1M62.1 23.5L57.7 6.8M66.1 23.5L63.4 11.5M65.1 23.5L57.6 15.8M64.4 23.5L69.2 11.6M65.6 23.5L53.9 16.6M65.5 23.5L58.4 11.2M65.3 23.5L74.7 15.4M62.4 23.5L72.9 13.9M64.4 23.5L66.5 4.4M66.0 23.5L70.8 14.8M62.7 23.5L58.5 6.3M66.7 23.5L74.9 15.3M66.2 23.5L69.0 8.1M66.8 23.5L54.7 8.9M64.7 23.5L66.5 10.1M66.8 23.5L67.0 12.0M64.8 23.5L60.7 4.8M64.7 23.5L68.8 12.8M63.3 23.5L77.6 13.6M65.9 23.5L72.5 16.6M65.4 23.5L57.4 13.6M63.3 23.5L54.9 13.4M63.9 23.5L65.5 7.4M66.4 23.5L54.3 7.6M63.3 23.5L56.1 9.0M65.9 23.5L73.0 12.9M62.1 23.5L61.0 5.9M66.8 23.5L71.4 5.6M62.5 23.5L58.1 14.8M64.8 23.5L66.2 6.8M63.6 23.5L63.0 4.3M65.0 23.5L65.0 7.3M62.9 23.5L71.8 6.6M63.0 23.5L71.1 10.9M65.1 23.5L72.0 6.6" stroke="#2a4c15" stroke-width="1.1" fill="none" stroke-linecap="round"/><path d="M65.3 23.5L78.1 14.3M64.6 23.5L62.1 3.8M66.2 23.5L78.4 14.7M66.8 23.5L55.4 15.3M62.7 23.5L54.9 10.2M63.5 23.5L77.0 14.6M66.3 23.5L56.9 12.1M63.2 23.5L54.0 13.9M63.0 23.5L73.3 6.8M63.2 23.5L51.1 13.6M63.8 23.5L66.4 10.7M62.1 23.5L57.7 15.9M62.1 23.5L72.2 5.6M63.6 23.5L63.8 4.4M65.7 23.5L54.1 14.5M66.0 23.5L72.3 8.6M66.5 23.5L59.3 6.8M64.9 23.5L68.2 9.1M67.0 23.5L53.6 13.9M62.4 23.5L62.1 3.9M65.1 23.5L70.5 9.4M63.5 23.5L59.4 14.1M66.5 23.5L57.9 13.8M63.6 23.5L62.1 3.3M66.0 23.5L56.5 12.1M66.2 23.5L55.1 13.2M63.6 23.5L68.5 8.1M66.0 23.5L69.0 6.7M64.0 23.5L68.7 5.5M66.7 23.5L72.1 16.5M65.1 23.5L55.3 13.6M66.4 23.5L60.4 7.4M65.2 23.5L72.3 7.3M66.9 23.5L54.6 8.4M63.6 23.5L66.0 4.0M66.2 23.5L65.1 4.4M63.5 23.5L56.5 10.9M66.2 23.5L59.1 10.2M66.1 23.5L55.4 13.8M63.0 23.5L63.8 8.5M62.5 23.5L59.6 7.3M63.0 23.5L65.3 10.0M66.3 23.5L69.0 8.0M65.7 23.5L72.3 14.6M63.6 23.5L73.4 15.2M64.5 23.5L64.7 4.0M66.2 23.5L57.4 14.0M62.3 23.5L72.3 16.8M66.5 23.5L64.8 11.3M66.9 23.5L67.8 7.6" stroke="#4c7c27" stroke-width="0.88" fill="none" stroke-linecap="round"/></g>
 <path d="M55.5 22.3H73.8L71.8 40H57.6Z" fill="#f8f8f8"/>
 <path d="M66 22.3H73.8L71.8 40H66Z" fill="#ececeb"/>
 <path d="M44 35.8L56 34.5L57.4 39.5H72L73 36L84.8 38.5L74 45.2L40.4 40.5Z" fill="#51514f"/>
 <path d="M34.7 46L42 43L66.2 47L58 51.5Z" fill="#3c3c3b"/>
</g>

<g id="laptopT">
 <rect width="90" height="90" fill="#dadbd7"/>
 <path d="M0 50H90V90H0Z" fill="#ededeb"/>
 <path d="M0 11H25.5Q28 11 28 13.5V90H0Z" fill="#17191d"/>
 <path d="M0 14H25.6V67H0Z" fill="#f4f4f5"/>
 <path d="M2 67Q8 55 25.6 48V67Z" fill="#1e4a6b"/>
 <path d="M0 68H28V90H0Z" fill="#1c1d21"/>
 <path d="M2 72H23M2 76H23M2 80H23" stroke="#3a3c55" stroke-width="1.6" stroke-dasharray="2 1"/>
 <g filter="url(#bl0)"><path d="M73.7 33.0L71.2 7.1M74.9 33.0L66.0 13.2M72.6 33.0L54.9 17.8M69.8 33.0L91.1 19.7M73.4 33.0L61.0 19.8M73.2 33.0L68.3 11.7M71.5 33.0L88.6 21.0M69.8 33.0L81.2 10.7M74.7 33.0L66.6 11.3M72.0 33.0L55.1 19.8M70.4 33.0L58.5 21.3M71.5 33.0L57.4 13.1M69.0 33.0L84.7 9.9M70.7 33.0L82.0 16.7M70.6 33.0L85.6 15.7M71.0 33.0L79.5 16.4M71.4 33.0L84.0 14.8M71.7 33.0L74.4 5.5M69.9 33.0L74.5 7.9M70.7 33.0L80.3 14.3M70.0 33.0L64.3 10.2M69.2 33.0L85.5 21.6M73.7 33.0L70.4 14.1M75.6 33.0L63.3 16.6M70.4 33.0L67.2 14.2M74.3 33.0L61.7 14.7M75.8 33.0L80.5 10.3M74.1 33.0L79.4 14.3M71.1 33.0L72.5 10.9M70.8 33.0L61.6 14.7M75.6 33.0L82.5 18.2M75.3 33.0L66.6 6.0M73.3 33.0L82.8 16.4M71.7 33.0L68.6 12.0M70.4 33.0L81.8 19.4M69.2 33.0L59.1 11.8M70.3 33.0L65.6 16.7M73.5 33.0L83.9 16.0M71.9 33.0L77.9 12.8M75.5 33.0L80.1 15.9M69.4 33.0L82.1 20.7M69.0 33.0L62.2 23.3M75.7 33.0L89.1 19.9M72.3 33.0L59.4 10.7M72.8 33.0L82.1 15.5M75.6 33.0L89.6 20.8M71.4 33.0L86.2 14.4M72.4 33.0L88.9 13.8M71.5 33.0L78.0 10.7M69.9 33.0L67.1 9.5M70.8 33.0L88.9 19.5M73.4 33.0L57.1 17.4M73.0 33.0L74.8 8.4M76.0 33.0L65.3 14.5M70.2 33.0L72.6 9.6M71.6 33.0L62.5 17.6M73.5 33.0L67.9 10.5M70.2 33.0L88.8 21.5M70.6 33.0L61.9 9.6M73.1 33.0L78.9 9.7M75.6 33.0L86.6 21.7M74.1 33.0L62.2 14.5M74.0 33.0L79.9 10.6M75.3 33.0L66.4 4.8M71.2 33.0L84.2 17.9M69.3 33.0L69.6 16.2M71.6 33.0L86.8 20.3M75.4 33.0L62.8 13.8M69.1 33.0L78.5 12.4M74.9 33.0L74.8 9.1M74.6 33.0L82.3 23.1M70.5 33.0L79.4 4.8M73.6 33.0L81.5 8.0M69.8 33.0L65.9 18.1M73.2 33.0L84.1 24.3M70.6 33.0L88.8 13.8M74.3 33.0L84.3 11.0M70.2 33.0L82.2 15.3M69.6 33.0L77.4 12.9M73.0 33.0L69.1 12.6M75.4 33.0L74.3 2.7M75.6 33.0L84.1 20.0M75.7 33.0L63.8 19.6M70.4 33.0L79.2 12.2M73.7 33.0L86.7 20.4M70.2 33.0L80.4 11.3M70.4 33.0L70.6 14.4M72.0 33.0L80.3 12.4M72.8 33.0L77.6 16.1" stroke="#2a4c15" stroke-width="1.5" fill="none" stroke-linecap="round"/><path d="M70.9 33.0L58.8 23.3M72.9 33.0L80.9 11.6M70.1 33.0L60.3 18.3M69.5 33.0L55.6 18.6M70.2 33.0L78.5 18.2M74.1 33.0L68.8 17.0M71.7 33.0L62.3 16.0M70.2 33.0L58.6 18.9M71.4 33.0L59.9 23.1M72.4 33.0L71.1 3.0M75.9 33.0L57.0 20.7M71.2 33.0L72.6 15.6M70.8 33.0L71.4 7.5M71.0 33.0L83.3 21.9M72.6 33.0L61.2 8.6M69.9 33.0L81.0 10.3M72.0 33.0L69.5 13.6M75.5 33.0L75.4 8.2M73.1 33.0L82.2 15.6M69.1 33.0L82.3 13.3M75.3 33.0L88.5 17.2M75.6 33.0L66.9 14.0M74.3 33.0L63.8 10.4M72.5 33.0L59.1 11.1M73.3 33.0L60.5 17.5M75.0 33.0L62.9 14.9M74.9 33.0L58.4 17.3M69.4 33.0L87.3 21.7M71.5 33.0L88.0 15.7M75.1 33.0L66.1 17.1M70.1 33.0L60.5 24.5M69.7 33.0L86.1 17.1M72.7 33.0L74.1 10.2M75.7 33.0L86.5 16.1M73.3 33.0L69.4 11.3M73.3 33.0L57.8 17.4M73.3 33.0L64.8 19.1M73.2 33.0L62.2 8.2M72.4 33.0L60.0 24.1M71.3 33.0L85.0 22.2M70.7 33.0L78.1 17.1M74.0 33.0L71.0 11.4M75.3 33.0L66.7 18.4M69.8 33.0L66.1 16.8M73.2 33.0L67.3 11.2M75.0 33.0L61.9 20.2M72.9 33.0L88.3 17.7M74.9 33.0L76.7 15.0M69.5 33.0L66.8 12.8M74.9 33.0L73.6 8.4M72.7 33.0L85.4 13.5M70.2 33.0L87.3 21.5M73.0 33.0L78.5 14.6M73.6 33.0L63.0 7.4M74.7 33.0L61.0 17.4M72.1 33.0L89.8 21.2M75.7 33.0L66.8 17.9M72.4 33.0L61.7 23.5M75.9 33.0L84.4 13.1M71.3 33.0L59.7 15.6M75.4 33.0L58.2 11.4" stroke="#4c7c27" stroke-width="1.20" fill="none" stroke-linecap="round"/></g>
 <path d="M59.4 31.5H85.6L82.6 56.6H62.4Z" fill="#f8f8f8"/>
 <path d="M74 31.5H85.6L82.6 56.6H74Z" fill="#ececeb"/>
 <path d="M45 51L61 49.5L62.4 56.6H82.6L84 52L90 53V64.5L72 66L39.4 57Z" fill="#51514f"/>
 <path d="M30 62L40 59.5L76 64L66 70Z" fill="#3c3c3b"/>
</g>


<g id="woman">
 <rect width="80" height="80" fill="#fff"/>
 <g clip-path="url(#cW)">
  <rect width="80" height="80" fill="#7f8f92"/>
  <g filter="url(#bl2)">
   <rect x="-4" y="6" width="26" height="40" fill="#d2bf92"/>
   <rect x="0" y="40" width="14" height="20" fill="#8fa3b8"/>
   <rect x="56" y="0" width="28" height="30" fill="#8a8672"/>
   <rect x="58" y="26" width="26" height="54" fill="#5f8792"/>
   <rect x="62" y="34" width="10" height="22" fill="#9a9c8a"/>
   <rect x="72" y="30" width="10" height="30" fill="#4f6f9a"/>
  </g>
  <g filter="url(#bl1)">
   <path d="M44 0C24 0 12 12 9 32C7 46 3 58 4 72L10 84H70C70 70 64 60 64 46C66 30 64 6 44 0Z" fill="#3d2e28"/>
   <path d="M9 38C5 52 3 62 6 76L20 84L30 80C20 72 16 56 19 42Z" fill="#4a382c"/>
   <path d="M7 58C8 68 12 75 20 80L30 82C22 74 16 66 13 56Z" fill="#a88a60"/>
   <path d="M53 50C60 56 66 64 64 74L58 82H48C56 74 56 62 50 56Z" fill="#a8875c"/>
   <path d="M24 84L30 62H52L60 84Z" fill="#d9ac92"/>
   <path d="M41 16C30 19 24 29 24.5 42C25 56 32 67 41 67.5C50 67 57 56 57.5 42C58 29 52 19 41 16Z" fill="#edc9b5"/><ellipse cx="30" cy="46" rx="4" ry="5" fill="#e6b6a4" opacity=".6"/><ellipse cx="51" cy="46" rx="4" ry="5" fill="#e6b6a4" opacity=".6"/>
   <path d="M24.5 40C23 28 30 17 44.6 15.5C55 17 59 28 57.5 40C56 30 52 22.5 44.6 18.5C36 20 27 28 24.5 40Z" fill="#3d2e28"/>
   <path d="M12 30C16 16 28 6 44 6L44.6 14C32 16 22 26 20 44Z" fill="#4a3a30"/>
   <path d="M30 66C36 72 46 72 52 64L50 74H32Z" fill="#c79a80" opacity=".7"/>
  </g>
  <ellipse cx="31" cy="36.4" rx="3.6" ry="1.7" fill="#3a2c2a"/><ellipse cx="49" cy="36.4" rx="3.6" ry="1.7" fill="#3a2c2a"/>
  <circle cx="31.3" cy="36.5" r="1" fill="#7fa0a8"/><circle cx="49" cy="36.5" r="1" fill="#7fa0a8"/>
  <path d="M25.5 32.6Q30.5 30 36 32.4M44.5 32.4Q50 30 55 32.6" stroke="#3d2e28" stroke-width="1.3" fill="none"/>
  <path d="M33.4 53.4Q36.5 52 39.5 53Q42.5 52 45.8 53.4Q39.5 59.5 33.4 53.4Z" fill="#a8404f"/>
  <path d="M36.5 47Q39.5 49 43 47" stroke="#c08f78" stroke-width="1.2" fill="none"/>
  <path d="M40 38L38.5 46" stroke="#ddb29c" stroke-width="1" fill="none"/>
  <rect x="55.3" y="47.5" width="2.2" height="3" fill="#3aa0a8"/><rect x="55.3" y="50.3" width="2.2" height="3" fill="#d9a630"/>
 </g>
</g>

<g id="man">
 <rect width="80" height="80" fill="#fff"/>
 <g clip-path="url(#cW)">
  <rect width="80" height="80" fill="url(#gMan)"/>
  <g filter="url(#bl1)">
   <path d="M9.5 67L20.7 53.5L26.3 58L37.5 72.6L48.7 78L53 62.5L56.5 58L65.5 69.2L72 84H4Z" fill="#4b4c3a"/>
   <path d="M25 50L55 44L56.5 58L53 62.5L48.7 78L37.5 72.6L26.3 58Z" fill="#c99a7c"/>
   <path d="M40 62L47 70L48.7 78L37.5 72.6Z" fill="#a87a60" opacity=".7"/>
   <path d="M20.7 53.5L26.3 58L32 68L24 64L14 62Z" fill="#3a3b2c"/>
   <path d="M53 62.5L56.5 58L62 64L52 74Z" fill="#3a3b2c"/>
   <path d="M40 1.5C52 1 60 10 60 24C60 36 54 44 46 48C40 51 32 51 28 46C24 40 21 30 21.5 22C22 10 30 2 40 1.5Z" fill="#dbad92"/>
   <path d="M53 3C60 6 63 14 62.5 22L59 21C58 14 56 8 53 3Z" fill="#b4b0aa"/>
   <path d="M25 6C22 10 20.5 16 21 21L23.5 19C23.5 14 24 10 25 6Z" fill="#b8b2aa"/>
   <ellipse cx="59.5" cy="30" rx="3" ry="6.5" fill="#cf9c80"/>
   <path d="M30 3C36 0 46 0 52 4C46 3 36 3 30 3Z" fill="#e8c4ae"/>
   <path d="M28 44C32 49 40 50 46 47L44 40H30Z" fill="#c0927a" opacity=".6"/>
  </g>
  <path d="M49.8 19.6L58.8 22.4" stroke="#151515" stroke-width="2" fill="none"/>
  <rect x="19" y="18.6" width="15" height="8" rx="2.2" fill="#e5c3ae" stroke="#141414" stroke-width="2.2"/>
  <rect x="36" y="17.9" width="14" height="7.8" rx="2.2" fill="#e5c3ae" stroke="#141414" stroke-width="2.2"/>
  <path d="M34 21.5H36" stroke="#141414" stroke-width="1.8"/>
  <circle cx="26.5" cy="22.6" r="1.3" fill="#3a3a3a"/><circle cx="42.5" cy="21.8" r="1.3" fill="#3a3a3a"/>
  <path d="M27.4 36.2Q34 34.4 42 37.2" stroke="#8c5a48" stroke-width="1.4" fill="none"/>
  <path d="M30 40.5Q33 42.5 36.5 40.5" stroke="#9a938c" stroke-width="2.6" fill="none" opacity=".8"/>
  <path d="M32 26Q28.5 31 31 33.5H36" stroke="#b58468" stroke-width="1.2" fill="none"/>
  <path d="M41 33Q45 36 44 41" stroke="#b98a70" stroke-width="1" fill="none"/>
 </g>
</g>

<g id="logo">
 <rect width="90" height="29" fill="#fff"/>
 <path d="M0.8 11.4L20.6 8.2L14 27.6Z" fill="#a9b9f5"/>
 <path d="M0.8 11.4L20.6 8.2L12 19Z" fill="#2f5be5"/>
 <text x="27" y="23" font-family="Liberation Sans, sans-serif" font-size="12.5" fill="#f3f5fc" letter-spacing=".2">althemes</text>
</g>

<g id="boats">
 <rect width="90" height="59" fill="url(#gBoat)"/>
 <rect width="90" height="59" fill="url(#gBoat2)"/>
 <g filter="url(#bl2)" opacity=".55">
  <path d="M5 46L20 41L28 48L10 50Z" fill="#6f9298"/>
  <path d="M43 30L52 28L54 33Z" fill="#6f9298"/>
  <path d="M49 38L58 36L62 41L52 41Z" fill="#6f9298"/>
 </g>
 <path d="M59.3 20.5L66 19L74.3 16.6L70 21.5L64 23.5Z" fill="#62b6a8"/>
 <path d="M76.5 24L82 21L90 19.2V24L85 27.5L79 28Z" fill="#5cb0a5"/>
 <path d="M49 26L58 25L62 21L64 24.5L68 22.8L63 29L60.7 32.2H53.6Z" fill="#3aa5df"/>
 <path d="M55 34.2L66 32L70.5 27.5L72.5 30.5L79.4 27L75 33.5L72.2 37.8L60.7 40Z" fill="#34a3e0"/>
 <path d="M60.7 40L66 32L70.5 27.5L72.2 37.8Z" fill="#2b94d2" opacity=".6"/>
 <path d="M8.9 40.4L22 36.5L26.5 32L29 35.5L43.3 31.4L39.3 39.3L27.8 46.4L17 46.1Z" fill="#f4565c"/>
 <path d="M22 36.5L26.5 32L29 35.5L27.8 46.4Z" fill="#e8434c" opacity=".7"/>
</g>

<g id="stones">
 <rect width="90" height="59" fill="url(#gStone)"/>
 <rect x="0" y="48" width="90" height="11" fill="#cbc8d6" opacity=".5"/>
 <g filter="url(#bl1)">
 <ellipse cx="30.6" cy="31" rx="7.9" ry="9.6" fill="#7d7a75"/>
 <ellipse cx="55" cy="31" rx="7.9" ry="9.6" fill="#7a7772"/>
 <ellipse cx="29" cy="27" rx="4.5" ry="4" fill="#96938c" opacity=".7"/>
 <ellipse cx="53.5" cy="27" rx="4.5" ry="4" fill="#96938c" opacity=".7"/>
 </g>
 <path d="M38 33L43 36.5L47.5 33" stroke="#4b4a48" stroke-width=".9" fill="none"/>
 <path d="M29 40.5V45M32.5 40.5V45M53 40.5V45M56.5 40.5V45" stroke="#4b4a48" stroke-width=".8"/>
 <path d="M27.5 45.3H30.5M31.5 45.3H34.5M51.5 45.3H54.5M55.5 45.3H58.5" stroke="#4b4a48" stroke-width=".8"/>
 <rect x="24.3" y="24.6" width="6" height="4.2" rx="1" fill="#e9e9ec" stroke="#151515" stroke-width="1.2"/>
 <rect x="32.2" y="24.6" width="6" height="4.2" rx="1" fill="#e9e9ec" stroke="#151515" stroke-width="1.2"/>
 <rect x="48.7" y="24.6" width="6" height="4.2" rx="1" fill="#e9e9ec" stroke="#151515" stroke-width="1.2"/>
 <rect x="56.6" y="24.6" width="6" height="4.2" rx="1" fill="#e9e9ec" stroke="#151515" stroke-width="1.2"/>
 <path d="M30.3 26H32.2M54.7 26H56.6M22.5 25.5H24.3M62.6 25.5H64.5" stroke="#151515" stroke-width="1"/>
</g>

<g id="yellow">
 <rect width="90" height="60" fill="url(#gYel)"/>
 <g filter="url(#bl2)">
  <path d="M13.2 9.7L24.5 15L30.6 18.5L36 26L35 30L32.4 35L24.5 32.4L17.6 23.7L13.7 15Z" fill="#6a5220" opacity=".75"/>
  <path d="M20 16L30 21L34 28L31 33L25 29Z" fill="#4a3616" opacity=".85"/>
 </g>
 <g filter="url(#bl1)">
  <path d="M15 11L26 20M14 16L24 25M18 12L29 20M17 22L27 30M22 28L31 33" stroke="#5a4418" stroke-width="1.2" opacity=".55" fill="none"/>
 </g>
 <g filter="url(#bl0)">
 <path d="M39.3 50.7L55.9 48L57.6 60H38.5Z" fill="#1f1e1b"/>
 <path d="M33.7 32.4L38 28L44.6 25.4L51.5 29.8L55.9 47.2L41 51.5L38.5 40.2Z" fill="#80aec4"/>
 <path d="M38 28L44.6 25.4L46 30L40.5 33Z" fill="#a2c6d6" opacity=".7"/>
 <path d="M41 20.5L46 19.5L55 27.2L48.5 30.2L45.5 25.5L42 24.5Z" fill="#e6b48e"/>
 <ellipse cx="35" cy="21.5" rx="6.6" ry="3.9" transform="rotate(18 35 21.5)" fill="#e8b893"/>
 <path d="M37 18.8L40.5 20.2L39.5 22.5L36.8 21Z" fill="#b5646a" opacity=".8"/>
 <path d="M38 24.5L44 27L42 30L37.5 28Z" fill="#dba888"/>
 <path d="M26.7 22.8Q28 27.5 35 27.4" stroke="#efefef" stroke-width="2" fill="none"/>
 <path d="M33.5 25.5L37.5 26L37 29L33 28.3Z" fill="#e3e3e3"/>
 <path d="M30.6 41L37.6 43.7L47.2 46.3L44.6 48.2L36.7 45.6L30.4 42.6Z" fill="#e3b08a"/>
 <path d="M38.5 36L42 39L47.2 46.3L44 46Z" fill="#e3b08a"/>
 <path d="M25.8 38L35.9 41.3L35.5 42.6L25.4 39.4Z" fill="#1b1b1b"/>
 </g>
</g>

<g id="bld">
 <rect width="90" height="60" fill="url(#gSky)"/>
 <g filter="url(#bl0)">
 <path d="M40.6 28L39.8 36.7L27.2 48L13.2 60H1.9L9.7 48L24.5 38.5Z" fill="#deedf3"/>
 <path d="M40.6 28L39.8 36.7L27.2 48L33 39Z" fill="#cfe5ee"/>
 <path d="M34 35L22 48M30 36L12 54M37 36L28 45" stroke="#eef6f9" stroke-width="1" opacity=".8"/>
 <path d="M40.6 28L60.7 60H58.5L39.8 36.7Z" fill="#c3deeb"/>
 <path d="M41 31L57 56" stroke="#a9cde0" stroke-width=".9" opacity=".8"/>
 <path d="M39.8 36.7L58.5 60H40.2L28 48Z" fill="#ebe9e4"/>
 <path d="M27.2 48L40.2 60H13.2Z" fill="#dfe6e8"/>
 <path d="M28 48L40.2 60H37L27 50Z" fill="#d5d3cd"/>
 <path d="M39.8 36.7L28 48" stroke="#f6f5f2" stroke-width=".8"/>
 </g>
</g>

</defs></svg>
<div class="th" style="left:8px;top:39px;width:90px;height:66px"><svg viewBox="0 0 90 66" preserveAspectRatio="none"><use href="#b1"/></svg></div>
<div class="lb" style="left:-10px;top:110px"><span style="">b1</span></div>
<div class="th" style="left:120px;top:15px;width:90px;height:90px"><svg viewBox="0 0 90 90" preserveAspectRatio="none"><use href="#bg"/></svg></div>
<div class="lb" style="left:102px;top:110px"><span style="">bg</span></div>
<div class="th" style="left:232px;top:52px;width:90px;height:53px"><svg viewBox="0 0 90 53" preserveAspectRatio="none"><use href="#books"/></svg></div>
<div class="lb" style="left:214px;top:110px"><span style="letter-spacing:-0.052px;">books-business-</span><br><span style="letter-spacing:-0.121px;">computer-45965</span><br><span style="letter-spacing:-1.174px;">4</span></div>
<div class="th" style="left:344px;top:46px;width:90px;height:59px"><svg viewBox="0 0 90 59" preserveAspectRatio="none"><use href="#pencils"/></svg></div>
<div class="lb" style="left:326px;top:110px"><span style="letter-spacing:-0.100px;">color-pencils-dra</span><br><span style="letter-spacing:0.420px;">wing-coloring-c</span><br><span style="letter-spacing:0.101px;">olored-pencils-1</span><br><span style="letter-spacing:-0.774px;">59825</span></div>
<div class="th" style="left:456px;top:46px;width:90px;height:59px"><svg viewBox="0 0 90 59" preserveAspectRatio="none"><use href="#pencils"/></svg></div>
<div class="th" style="left:568px;top:46px;width:90px;height:59px"><svg viewBox="0 0 90 59" preserveAspectRatio="none"><use href="#pencils"/></svg></div>
<div class="th" style="left:680px;top:46px;width:90px;height:59px"><svg viewBox="0 0 90 59" preserveAspectRatio="none"><use href="#pencils"/></svg></div>
<div class="th" style="left:792px;top:46px;width:90px;height:59px"><svg viewBox="0 0 90 59" preserveAspectRatio="none"><use href="#pencils"/></svg></div>
<div class="th" style="left:904px;top:40px;width:90px;height:65px"><svg viewBox="0 0 90 65" preserveAspectRatio="none"><use href="#laptop"/></svg></div>
<div class="th" style="left:1016px;top:15px;width:90px;height:90px"><svg viewBox="0 0 90 90" preserveAspectRatio="none"><use href="#laptopT"/></svg></div>
<div class="th" style="left:1128px;top:40px;width:90px;height:65px"><svg viewBox="0 0 90 65" preserveAspectRatio="none"><use href="#laptop"/></svg></div>
<div class="th" style="left:1240px;top:40px;width:90px;height:65px"><svg viewBox="0 0 90 65" preserveAspectRatio="none"><use href="#laptop"/></svg></div>
<div class="th" style="left:1357px;top:25px;width:80px;height:80px"><svg viewBox="0 0 80 80" preserveAspectRatio="none"><use href="#woman"/></svg></div>
<div class="lb" style="left:1334px;top:110px"><span style="letter-spacing:-0.462px;">Layer-49866</span></div>
<div class="th" style="left:1469px;top:25px;width:80px;height:80px"><svg viewBox="0 0 80 80" preserveAspectRatio="none"><use href="#man"/></svg></div>
<div class="lb" style="left:1446px;top:110px"><span style="letter-spacing:-0.462px;">Layer-49871</span></div>
<div class="th" style="left:1576px;top:76px;width:90px;height:29px"><svg viewBox="0 0 90 29" preserveAspectRatio="none"><use href="#logo"/></svg></div>
<div class="lb" style="left:1558px;top:110px"><span style="letter-spacing:0.243px;">logo-demo-bar</span></div>
<div class="th" style="left:8px;top:178px;width:90px;height:59px"><svg viewBox="0 0 90 59" preserveAspectRatio="none"><use href="#boats"/></svg></div>
<div class="lb" style="left:-10px;top:242px"><span style="letter-spacing:-0.064px;">pexels-photo-194</span><br><span style="letter-spacing:-0.841px;">094</span></div>
<div class="th" style="left:120px;top:178px;width:90px;height:59px"><svg viewBox="0 0 90 59" preserveAspectRatio="none"><use href="#boats"/></svg></div>
<div class="lb" style="left:102px;top:242px"><span style="letter-spacing:-0.064px;">pexels-photo-194</span><br><span style="letter-spacing:-0.596px;">094-300x196</span></div>
<div class="th" style="left:232px;top:178px;width:90px;height:59px"><svg viewBox="0 0 90 59" preserveAspectRatio="none"><use href="#boats"/></svg></div>
<div class="lb" style="left:214px;top:242px"><span style="letter-spacing:-0.064px;">pexels-photo-194</span><br><span style="letter-spacing:-0.596px;">094-400x261</span></div>
<div class="th" style="left:344px;top:178px;width:90px;height:59px"><svg viewBox="0 0 90 59" preserveAspectRatio="none"><use href="#stones"/></svg></div>
<div class="lb" style="left:326px;top:242px"><span style="letter-spacing:-0.064px;">pexels-photo-356</span><br><span style="letter-spacing:-0.841px;">421</span></div>
<div class="th" style="left:1352px;top:177px;width:90px;height:60px"><svg viewBox="0 0 90 60" preserveAspectRatio="none"><use href="#yellow"/></svg></div>
<div class="lb" style="left:1334px;top:242px"><span style="letter-spacing:-0.064px;">pexels-photo-761</span><br><span style="letter-spacing:-0.596px;">963-300x200</span></div>
<div class="th" style="left:1464px;top:177px;width:90px;height:60px"><svg viewBox="0 0 90 60" preserveAspectRatio="none"><use href="#yellow"/></svg></div>
<div class="lb" style="left:1446px;top:242px"><span style="letter-spacing:-0.064px;">pexels-photo-761</span><br><span style="letter-spacing:-0.596px;">963-400x267</span></div>
<div class="th" style="left:1576px;top:177px;width:90px;height:60px"><svg viewBox="0 0 90 60" preserveAspectRatio="none"><use href="#yellow"/></svg></div>
<div class="lb" style="left:1558px;top:242px"><span style="letter-spacing:-0.064px;">pexels-photo-761</span><br><span style="letter-spacing:-0.596px;">963-768x512</span></div>
<div class="th" style="left:8px;top:309px;width:90px;height:60px"><svg viewBox="0 0 90 60" preserveAspectRatio="none"><use href="#yellow"/></svg></div>
<div class="lb" style="left:-10px;top:374px"><span style="letter-spacing:-0.064px;">pexels-photo-761</span><br><span style="letter-spacing:-0.603px;">963-1024x683</span></div>
<div class="th" style="left:120px;top:309px;width:90px;height:60px"><svg viewBox="0 0 90 60" preserveAspectRatio="none"><use href="#bld"/></svg></div>
<div class="lb" style="left:102px;top:374px"><span style="letter-spacing:-0.064px;">pexels-photo-102</span><br><span style="letter-spacing:-0.799px;">9615</span></div>
<div class="th" style="left:232px;top:309px;width:90px;height:60px"><svg viewBox="0 0 90 60" preserveAspectRatio="none"><use href="#bld"/></svg></div>
<div class="lb" style="left:214px;top:374px"><span style="letter-spacing:-0.064px;">pexels-photo-102</span><br><span style="letter-spacing:-0.603px;">9615-300x200</span></div>
<div class="th" style="left:344px;top:309px;width:90px;height:60px"><svg viewBox="0 0 90 60" preserveAspectRatio="none"><use href="#bld"/></svg></div>
<div class="lb" style="left:326px;top:374px"><span style="letter-spacing:-0.064px;">pexels-photo-102</span><br><span style="letter-spacing:-0.603px;">9615-400x267</span></div>
<div class="a" style="left:406px;top:91px;width:960px;height:653px;background:#fff;box-shadow:0 0 7px rgba(0,0,0,.22)"></div>
<div class="a" style="left:406px;top:91px;width:124px;height:653px;background:#2b579a;"></div>
<div class="a" style="left:1365px;top:91px;width:1px;height:654px;background:#8e8e8e;"></div>
<div class="a" style="left:530px;top:744px;width:836px;height:1px;background:#8e8e8e;"></div>
<div class="a" style="left:406px;top:744px;width:124px;height:1px;background:#70737a;"></div>
<div class="a" style="left:433px;top:637px;width:71px;height:1px;background:#5d82bc;"></div>
<div class="t " style="left:433px;top:660px;letter-spacing:-0.282px;color:#fff;font-size:13px;">Account</div>
<div class="t " style="left:433px;top:698px;letter-spacing:-0.357px;color:#fff;font-size:13px;">Options</div>
<div class="a" style="left:415px;top:91px;width:944px;height:531px;background:#fff;box-shadow:0 3px 14px rgba(0,0,0,.35)"></div>
<div class="a" style="left:414px;top:90px;width:946px;height:1px;background:#4d4d4d;"></div>
<div class="a" style="left:1360px;top:90px;width:6px;height:1px;background:#9a9a9a;"></div>
<div class="a" style="left:530px;top:90px;width:718px;height:1px;background:#8b1c1c;"></div>
<div class="a" style="left:414px;top:91px;width:1px;height:531px;background:#6f6f6f;"></div>
<div class="a" style="left:1359px;top:91px;width:1px;height:531px;background:#6f6f6f;"></div>
<div class="a" style="left:414px;top:621px;width:946px;height:1px;background:#6f6f6f;"></div>
<svg class="a" style="left:423px;top:97px" width="16" height="16" viewBox="0 0 16 16"><path d="M0 1.6L9.6 0V16L0 14.4Z" fill="#2b579a"/><rect x="9.6" y="1.8" width="5.9" height="12.4" fill="#fff" stroke="#2b579a" stroke-width="1"/><path d="M10.8 4.5H14M10.8 6.8H14M10.8 9.1H14M10.8 11.4H14" stroke="#2b579a" stroke-width="1"/><path d="M1.7 5.2L3.1 10.8L4.6 6.2L6.1 10.8L7.6 5.2" stroke="#fff" stroke-width="1.1" fill="none"/></svg>
<div class="t " style="left:444px;top:99px;letter-spacing:-0.575px;">Save As</div>
<svg class="a" style="left:1338px;top:99px" width="12" height="12" viewBox="0 0 12 12"><path d="M1 1L11 11M11 1L1 11" stroke="#000" stroke-width="1.1" fill="none"/></svg>
<svg class="a" style="left:425px;top:129px" width="100" height="18" viewBox="0 0 100 18"><path d="M3.5 9H15M8.5 4L3.5 9L8.5 14" stroke="#cfcfcf" stroke-width="1.7" fill="none"/><path d="M33 9H45M40 4L45 9L40 14" stroke="#cfcfcf" stroke-width="1.7" fill="none"/><path d="M59.5 7L62.5 10L65.5 7" stroke="#cfcfcf" stroke-width="1.3" fill="none"/><path d="M83 15V4M77.8 9.2L83 4L88.2 9.2" stroke="#666" stroke-width="1.9" fill="none"/></svg>
<div class="a" style="left:521px;top:127px;width:610px;height:20px;border:1px solid #d9d9d9;background:#fff"></div>
<div class="a" style="left:1112px;top:128px;width:1px;height:20px;background:#d9d9d9;"></div>
<svg class="a" style="left:525px;top:129px" width="14" height="16" viewBox="0 0 14 16"><path d="M1.5 .5H9.5L12.5 3.5V15.5H1.5Z" fill="#fff" stroke="#8a8a8a" stroke-width="1"/><path d="M9.5 .5V3.5H12.5" fill="none" stroke="#8a8a8a" stroke-width="1"/><path d="M3.5 5.5H10.5M3.5 9.5H10.5" stroke="#3b8ad8" stroke-width="1"/><path d="M3.5 7.5H10.5M3.5 11.5H6.5M3.5 13.5H6.5" stroke="#8fb4dc" stroke-width="1"/><rect x="7.5" y="11" width="3.5" height="2.5" fill="#4c8a5a"/><path d="M4 3.5L6 2L7 3.5" stroke="#3b8ad8" stroke-width=".9" fill="none"/></svg>
<div class="t " style="left:561px;top:130px;letter-spacing:-0.453px;">This PC</div>
<div class="t " style="left:624.2px;top:130px;letter-spacing:-0.292px;">Local Disk (C:)</div>
<div class="t " style="left:722.2px;top:130px;letter-spacing:-0.667px;">Users</div>
<div class="t " style="left:773.4px;top:130px;letter-spacing:-0.684px;">User</div>
<div class="t " style="left:819.1px;top:130px;letter-spacing:0.001px;">Documents</div>
<svg class="a" style="left:545.5px;top:133.5px" width="6" height="8" viewBox="0 0 6 8"><path d="M1.3 1.2L4.3 4L1.3 6.8" stroke="#666" stroke-width="1.7" fill="none"/></svg>
<svg class="a" style="left:608px;top:133.5px" width="6" height="8" viewBox="0 0 6 8"><path d="M1.3 1.2L4.3 4L1.3 6.8" stroke="#666" stroke-width="1.7" fill="none"/></svg>
<svg class="a" style="left:707px;top:133.5px" width="6" height="8" viewBox="0 0 6 8"><path d="M1.3 1.2L4.3 4L1.3 6.8" stroke="#666" stroke-width="1.7" fill="none"/></svg>
<svg class="a" style="left:758.5px;top:133.5px" width="6" height="8" viewBox="0 0 6 8"><path d="M1.3 1.2L4.3 4L1.3 6.8" stroke="#666" stroke-width="1.7" fill="none"/></svg>
<svg class="a" style="left:804.5px;top:133.5px" width="6" height="8" viewBox="0 0 6 8"><path d="M1.3 1.2L4.3 4L1.3 6.8" stroke="#666" stroke-width="1.7" fill="none"/></svg>
<svg class="a" style="left:888px;top:133.5px" width="6" height="8" viewBox="0 0 6 8"><path d="M1.3 1.2L4.3 4L1.3 6.8" stroke="#666" stroke-width="1.7" fill="none"/></svg>
<svg class="a" style="left:1098px;top:135px" width="10" height="8" viewBox="0 0 10 8"><path d="M0.4 1.7L4.9 6.4L9.4 1.7" stroke="#707070" stroke-width="1.9" fill="none"/></svg>
<svg class="a" style="left:1116px;top:131px" width="13" height="14" viewBox="0 0 13 14"><path d="M4 5.1A4.5 4.5 0 1 0 10.7 5.3" stroke="#707070" stroke-width="1.5" fill="none"/><path d="M3.3 2.4H7.8V6.9M7.8 2.4L4.2 5" stroke="#707070" stroke-width="1.4" fill="none"/></svg>
<div class="a" style="left:1145px;top:127px;width:200px;height:20px;border:1px solid #d9d9d9;background:#fff"></div>
<div class="t " style="left:1154.3px;top:131px;letter-spacing:-0.215px;color:#6d6d6d;">Search Documents</div>
<svg class="a" style="left:1325px;top:132px" width="14" height="14" viewBox="0 0 14 14"><circle cx="9" cy="5" r="3.4" stroke="#777" stroke-width="1.5" fill="none"/><path d="M6.5 7.6L1.5 12.6" stroke="#777" stroke-width="1.8"/></svg>
<div class="a" style="left:415px;top:156px;width:944px;height:30px;background:#f5f6f7;"></div>
<div class="a" style="left:415px;top:186px;width:944px;height:1px;background:#eaebec;"></div>
<div class="t " style="left:433.4px;top:164px;letter-spacing:-0.274px;color:#1e395b;">Organise</div>
<svg class="a" style="left:485.2px;top:169.5px" width="8" height="5" viewBox="0 0 8 5"><path d="M0 0H8L4 4.5Z" fill="#1e395b"/></svg>
<div class="t " style="left:524.5px;top:164px;letter-spacing:-0.136px;color:#1e395b;">New folder</div>
<svg class="a" style="left:1265px;top:164px" width="17" height="13" viewBox="0 0 17 13"><rect x=".5" y=".5" width="4.2" height="12" fill="#fff" stroke="#8a8a8a" stroke-width="1"/><path d="M.5 4.5H4.7M.5 8.5H4.7" stroke="#8a8a8a" stroke-width=".8"/><rect x="2.1" y="2" width="1" height="1" fill="#3a8a5a"/><rect x="2.1" y="6" width="1" height="1" fill="#3a7ae0"/><rect x="2.1" y="10" width="1" height="1" fill="#e02020"/><path d="M6 2.5H10M12 2.5H16M6 6.5H10M12 6.5H16M6 10.5H10M12 10.5H16" stroke="#6a6a6a" stroke-width="1.1"/></svg>
<svg class="a" style="left:1290.5px;top:169px" width="8" height="5" viewBox="0 0 8 5"><path d="M0 0H8L4 4.5Z" fill="#1e395b"/></svg>
<div class="a" style="left:1328px;top:163px;width:16px;height:16px;border-radius:8px;background:#0b66c6;box-shadow:inset 0 0 0 1px #0a4f9e;color:#fff;font-weight:bold;font-size:12px;line-height:16px;text-align:center">?</div>
<div class="a" style="left:415px;top:387px;width:139px;height:24px;background:#d9d9d9;"></div>
<svg class="a" style="left:439px;top:198.5px" width="16" height="16" viewBox="0 0 16 16"><rect x=".5" y="1.5" width="15" height="10" fill="#4ec0f5" stroke="#2a9ad6" stroke-width="1"/><path d="M1 2H15V6L1 10Z" fill="#7fd6fb" opacity=".7"/><rect x="6.5" y="11.5" width="3" height="1.5" fill="#9a9a9a"/><rect x="2" y="13.5" width="12" height="1" fill="#8aa0b4"/></svg>
<div class="t " style="left:461px;top:200px;letter-spacing:-0.553px;max-width:93px;overflow:hidden;">This PC</div>
<svg class="a" style="left:447px;top:222.5px" width="16" height="16" viewBox="0 0 16 16"><path d="M8 .5L15 3.2V12L8 15.5L1 12V3.2Z" fill="#35c3dc"/><path d="M8 6.2V15.5L1 12V3.2Z" fill="#9fe6ef"/><path d="M8 .5L15 3.2L8 6.2L1 3.2Z" fill="#5fd5e6"/><path d="M8 6.2L15 3.2V12L8 15.5Z" fill="#1c8fb3"/><path d="M8 10V15.5L1 12V8Z" fill="#d8f4f7" opacity=".7"/></svg>
<div class="t " style="left:468.2px;top:224px;letter-spacing:-0.286px;max-width:85.8px;overflow:hidden;">3D Objects</div>
<svg class="a" style="left:447px;top:246.5px" width="16" height="16" viewBox="0 0 16 16"><rect x=".5" y="2.5" width="15" height="11" fill="#1e8fe8" stroke="#1673c4" stroke-width="1"/><path d="M1 3H15V7L1 11Z" fill="#44a6f2" opacity=".6"/><rect x="1" y="11.5" width="14" height="1.5" fill="#0c5fb0"/><rect x="2" y="12" width="1" height="1" fill="#fff"/><rect x="12" y="12" width="1" height="1" fill="#fff"/><rect x="13.5" y="12" width="1" height="1" fill="#fff"/></svg>
<div class="t " style="left:468.2px;top:248px;letter-spacing:-0.232px;max-width:85.8px;overflow:hidden;">Desktop</div>
<svg class="a" style="left:447px;top:270.5px" width="16" height="16" viewBox="0 0 16 16"><path d="M1.5 .5H9.5L12.5 3.5V15.5H1.5Z" fill="#fff" stroke="#8a8a8a" stroke-width="1"/><path d="M9.5 .5V3.5H12.5" fill="none" stroke="#8a8a8a" stroke-width="1"/><path d="M3.5 5.5H10.5M3.5 9.5H10.5" stroke="#3b8ad8" stroke-width="1"/><path d="M3.5 7.5H10.5M3.5 11.5H6.5M3.5 13.5H6.5" stroke="#8fb4dc" stroke-width="1"/><rect x="7.5" y="11" width="3.5" height="2.5" fill="#4c8a5a"/><path d="M4 3.5L6 2L7 3.5" stroke="#3b8ad8" stroke-width=".9" fill="none"/></svg>
<div class="t " style="left:468.2px;top:272px;letter-spacing:0.012px;max-width:85.8px;overflow:hidden;">Documents</div>
<svg class="a" style="left:447px;top:294.5px" width="16" height="16" viewBox="0 0 16 16"><path d="M5.5 .5H10.5V7H15L8 15L1 7H5.5Z" fill="#2b8de0"/><path d="M5.5 .5H10.5V4H5.5Z" fill="#4aa3ee"/></svg>
<div class="t " style="left:468.2px;top:296px;letter-spacing:-0.096px;max-width:85.8px;overflow:hidden;">Downloads</div>
<svg class="a" style="left:447px;top:318.5px" width="16" height="16" viewBox="0 0 16 16"><path d="M6.8 .3C7.3 3.6 12.6 4.2 11.6 10C11.4 7.4 9.4 6.2 8.2 6.2V12.4C8.2 14.6 6.4 15.8 4.6 15.8C3 15.8 2 14.8 2 13.6C2 12 3.5 10.9 5.2 10.9C5.8 10.9 6.4 11 6.8 11.2Z" fill="#1e9be8"/><path d="M6.8 .3C7.3 3.6 12.6 4.2 11.6 10C11.4 7.4 9.4 6.2 8.2 6.2V1.5Z" fill="#1787d6"/></svg>
<div class="t " style="left:468.2px;top:320px;letter-spacing:0.053px;max-width:85.8px;overflow:hidden;">Music</div>
<svg class="a" style="left:447px;top:342.5px" width="16" height="16" viewBox="0 0 16 16"><rect x=".5" y="2.5" width="15" height="11" fill="#fff" stroke="#8c8c8c" stroke-width="1"/><rect x="2" y="4" width="12" height="8" fill="#bfe3f7"/><path d="M2 9L6 7L10 9.5L14 8V12H2Z" fill="#4d8a5c"/><path d="M2 10.5L7 9L14 11V12H2Z" fill="#2f6a8a"/></svg>
<div class="t " style="left:468.2px;top:344px;letter-spacing:-0.231px;max-width:85.8px;overflow:hidden;">Pictures</div>
<svg class="a" style="left:447px;top:366.5px" width="16" height="16" viewBox="0 0 16 16"><rect x="1.5" y=".5" width="13" height="15" fill="#3a3a3a" stroke="#222" stroke-width="1"/><rect x="4.5" y="1.5" width="7" height="6" fill="#5a7ad8"/><rect x="4.5" y="8.5" width="7" height="6" fill="#3a62c8"/><path d="M5 5L7 3L9 5L11 3.5V7.5H5Z" fill="#e8b84a"/><path d="M5 12L8 10L11 12V14.5H5Z" fill="#d86a3a"/><path d="M2.5 2H3.5M2.5 4.5H3.5M2.5 7H3.5M2.5 9.5H3.5M2.5 12H3.5M2.5 14H3.5M12.5 2H13.5M12.5 4.5H13.5M12.5 7H13.5M12.5 9.5H13.5M12.5 12H13.5M12.5 14H13.5" stroke="#eee" stroke-width="1.2"/></svg>
<div class="t " style="left:468.2px;top:368px;letter-spacing:-0.312px;max-width:85.8px;overflow:hidden;">Videos</div>
<svg class="a" style="left:447px;top:390.5px" width="16" height="16" viewBox="0 0 16 16"><rect x="0" y="1" width="2.6" height="2.6" fill="#1fa8ea"/><rect x="3.3" y="1" width="2.6" height="2.6" fill="#1fa8ea"/><rect x="0" y="4.3" width="2.6" height="2.6" fill="#1fa8ea"/><rect x="3.3" y="4.3" width="2.6" height="2.6" fill="#1fa8ea"/><path d="M3 8.5H13L15 11.5H1Z" fill="#cfcfcf"/><rect x="1" y="11.5" width="14" height="3" fill="#2d2d2d"/><rect x="11.5" y="12.4" width="1.6" height="1.2" fill="#38e04a"/></svg>
<div class="t " style="left:468.2px;top:392px;letter-spacing:-0.292px;max-width:85.8px;overflow:hidden;">Local Disk (C:)</div>
<svg class="a" style="left:447px;top:414.5px" width="16" height="16" viewBox="0 0 16 16"><path d="M3 6.5H13L15 10H1Z" fill="#d4d4d4"/><path d="M3 6.5H13L13.6 7.6H2.4Z" fill="#eee"/><rect x="1" y="10" width="14" height="3.6" fill="#2d2d2d"/><rect x="11.5" y="11.2" width="1.6" height="1.2" fill="#38e04a"/></svg>
<div class="t " style="left:468.2px;top:416px;letter-spacing:-0.175px;max-width:85.8px;overflow:hidden;">Benchmark Solu</div>
<svg class="a" style="left:439px;top:446.5px" width="16" height="16" viewBox="0 0 16 16"><circle cx="10" cy="6" r="5.6" fill="#5aa4dc"/><path d="M6 3C8 1.5 12 1.5 14 3C12 4 11 6 12 8.5C10 8 8 9 7 7C6 6 5.5 4.5 6 3Z" fill="#8fd08a" opacity=".8"/><path d="M5 4Q10 0 15 5" stroke="#cfe6f6" stroke-width=".8" fill="none"/><rect x=".5" y="6.5" width="10" height="6.5" fill="#4ec0f5" stroke="#2a8ac6" stroke-width="1"/><rect x="4.5" y="13" width="2" height="1.5" fill="#9a9a9a"/><rect x="2.5" y="14.5" width="6" height="1" fill="#8aa0b4"/></svg>
<div class="t " style="left:461px;top:448px;letter-spacing:-0.001px;max-width:93px;overflow:hidden;">Network</div>
<div class="a" style="left:555px;top:187px;width:16px;height:283px;background:#f0f0f0;"></div>
<div class="a" style="left:555px;top:282px;width:15px;height:166px;background:#c2c3c4;"></div>
<svg class="a" style="left:558px;top:193px" width="10" height="7" viewBox="0 0 10 7"><path d="M1 6L5 2L9 6" stroke="#4a4a4a" stroke-width="1.9" fill="none"/></svg>
<svg class="a" style="left:558px;top:458.5px" width="10" height="7" viewBox="0 0 10 7"><path d="M1 1L5 5L9 1" stroke="#4a4a4a" stroke-width="1.9" fill="none"/></svg>
<div class="a" style="left:572px;top:187px;width:1px;height:283px;background:#f0f0f0;"></div>
<svg class="a" style="left:712px;top:187.5px" width="9" height="5" viewBox="0 0 9 5"><path d="M0.5 4.5L4.5 0.8L8.5 4.5" stroke="#777" stroke-width="1" fill="none"/></svg>
<div class="a" style="left:846px;top:187px;width:1px;height:25px;background:#e5e5e5;"></div>
<div class="a" style="left:966px;top:187px;width:1px;height:25px;background:#e5e5e5;"></div>
<div class="a" style="left:1086px;top:187px;width:1px;height:25px;background:#e5e5e5;"></div>
<div class="a" style="left:1166px;top:187px;width:1px;height:25px;background:#e5e5e5;"></div>
<div class="t " style="left:592.4px;top:193px;letter-spacing:-0.002px;color:#4c607a;">Name</div>
<div class="t " style="left:853.4px;top:193px;letter-spacing:-0.042px;color:#4c607a;">Date modified</div>
<div class="t " style="left:973.4px;top:193px;letter-spacing:-0.254px;color:#4c607a;">Type</div>
<div class="t " style="left:1093.4px;top:193px;letter-spacing:-0.711px;color:#4c607a;">Size</div>
<svg class="a" style="left:593px;top:220px" width="16" height="16" viewBox="0 0 16 16"><path d="M2.5 .5H13.5V8.5H14.5V15.5H2.5Z" fill="url(#gFold)" stroke="#e8c34e" stroke-width="1"/><path d="M12.5 15V10.5Q12.5 9.5 13.5 9.5H14.5" fill="none" stroke="#e8c34e" stroke-width="1"/><path d="M13 10H14V15H13Z" fill="#fbe9a8"/></svg>
<div class="t " style="left:613.4px;top:222px;letter-spacing:0.040px;">Adobe</div>
<div class="t " style="left:853.2px;top:222px;letter-spacing:-0.277px;color:#6d6d6d;">8/18/2022 5:44 PM</div>
<div class="t " style="left:973.4px;top:222px;letter-spacing:-0.126px;color:#6d6d6d;">File folder</div>
<svg class="a" style="left:593px;top:241px" width="16" height="16" viewBox="0 0 16 16"><path d="M2.5 .5H13.5V8.5H14.5V15.5H2.5Z" fill="url(#gFold)" stroke="#e8c34e" stroke-width="1"/><path d="M12.5 15V10.5Q12.5 9.5 13.5 9.5H14.5" fill="none" stroke="#e8c34e" stroke-width="1"/><path d="M13 10H14V15H13Z" fill="#fbe9a8"/></svg>
<div class="t " style="left:613.4px;top:243px;letter-spacing:0.037px;">Apowersoft</div>
<div class="t " style="left:853.2px;top:243px;letter-spacing:-0.277px;color:#6d6d6d;">8/15/2022 6:37 PM</div>
<div class="t " style="left:973.4px;top:243px;letter-spacing:-0.126px;color:#6d6d6d;">File folder</div>
<svg class="a" style="left:593px;top:262px" width="16" height="16" viewBox="0 0 16 16"><path d="M2.5 .5H13.5V8.5H14.5V15.5H2.5Z" fill="url(#gFold)" stroke="#e8c34e" stroke-width="1"/><path d="M12.5 15V10.5Q12.5 9.5 13.5 9.5H14.5" fill="none" stroke="#e8c34e" stroke-width="1"/><path d="M13 10H14V15H13Z" fill="#fbe9a8"/></svg>
<div class="t " style="left:613.4px;top:264px;letter-spacing:0.059px;">Audacity</div>
<div class="t " style="left:853.2px;top:264px;letter-spacing:-0.277px;color:#6d6d6d;">4/17/2022 2:47 PM</div>
<div class="t " style="left:973.4px;top:264px;letter-spacing:-0.126px;color:#6d6d6d;">File folder</div>
<svg class="a" style="left:593px;top:283px" width="16" height="16" viewBox="0 0 16 16"><path d="M2.5 .5H13.5V8.5H14.5V15.5H2.5Z" fill="url(#gFold)" stroke="#e8c34e" stroke-width="1"/><path d="M12.5 15V10.5Q12.5 9.5 13.5 9.5H14.5" fill="none" stroke="#e8c34e" stroke-width="1"/><path d="M13 10H14V15H13Z" fill="#fbe9a8"/></svg>
<div class="t " style="left:613.4px;top:285px;letter-spacing:-0.120px;">Bandicam</div>
<div class="t " style="left:853.2px;top:285px;letter-spacing:-0.277px;color:#6d6d6d;">8/28/2022 1:07 PM</div>
<div class="t " style="left:973.4px;top:285px;letter-spacing:-0.126px;color:#6d6d6d;">File folder</div>
<svg class="a" style="left:593px;top:304px" width="16" height="16" viewBox="0 0 16 16"><path d="M2.5 .5H13.5V8.5H14.5V15.5H2.5Z" fill="url(#gFold)" stroke="#e8c34e" stroke-width="1"/><path d="M12.5 15V10.5Q12.5 9.5 13.5 9.5H14.5" fill="none" stroke="#e8c34e" stroke-width="1"/><path d="M13 10H14V15H13Z" fill="#fbe9a8"/></svg>
<div class="t " style="left:613.4px;top:306px;letter-spacing:0.004px;">Custom Office Templates</div>
<div class="t " style="left:853.2px;top:306px;letter-spacing:-0.265px;color:#6d6d6d;">8/4/2022 6:26 PM</div>
<div class="t " style="left:973.4px;top:306px;letter-spacing:-0.126px;color:#6d6d6d;">File folder</div>
<svg class="a" style="left:593px;top:325px" width="16" height="16" viewBox="0 0 16 16"><path d="M2.5 .5H13.5V8.5H14.5V15.5H2.5Z" fill="url(#gFold)" stroke="#e8c34e" stroke-width="1"/><path d="M12.5 15V10.5Q12.5 9.5 13.5 9.5H14.5" fill="none" stroke="#e8c34e" stroke-width="1"/><path d="M13 10H14V15H13Z" fill="#fbe9a8"/></svg>
<div class="t " style="left:613.4px;top:327px;letter-spacing:-0.096px;">Downloads</div>
<div class="t " style="left:853.2px;top:327px;letter-spacing:-0.277px;color:#6d6d6d;">7/21/2022 4:50 PM</div>
<div class="t " style="left:973.4px;top:327px;letter-spacing:-0.126px;color:#6d6d6d;">File folder</div>
<svg class="a" style="left:593px;top:346px" width="16" height="16" viewBox="0 0 16 16"><path d="M2.5 .5H13.5V8.5H14.5V15.5H2.5Z" fill="url(#gFold)" stroke="#e8c34e" stroke-width="1"/><path d="M12.5 15V10.5Q12.5 9.5 13.5 9.5H14.5" fill="none" stroke="#e8c34e" stroke-width="1"/><path d="M13 10H14V15H13Z" fill="#fbe9a8"/></svg>
<div class="t " style="left:613.4px;top:348px;letter-spacing:-0.201px;">FeedbackHub</div>
<div class="t " style="left:853.2px;top:348px;letter-spacing:-0.277px;color:#6d6d6d;">5/21/2022 4:51 PM</div>
<div class="t " style="left:973.4px;top:348px;letter-spacing:-0.126px;color:#6d6d6d;">File folder</div>
<svg class="a" style="left:593px;top:367px" width="16" height="16" viewBox="0 0 16 16"><path d="M2.5 .5H13.5V8.5H14.5V15.5H2.5Z" fill="url(#gFold)" stroke="#e8c34e" stroke-width="1"/><path d="M12.5 15V10.5Q12.5 9.5 13.5 9.5H14.5" fill="none" stroke="#e8c34e" stroke-width="1"/><path d="M13 10H14V15H13Z" fill="#fbe9a8"/></svg>
<div class="t " style="left:613.4px;top:369px;letter-spacing:0.111px;">Lightshot</div>
<div class="t " style="left:853.2px;top:369px;letter-spacing:-0.277px;color:#6d6d6d;">5/30/2022 5:03 PM</div>
<div class="t " style="left:973.4px;top:369px;letter-spacing:-0.126px;color:#6d6d6d;">File folder</div>
<svg class="a" style="left:593px;top:388px" width="16" height="16" viewBox="0 0 16 16"><path d="M2.5 .5H13.5V8.5H14.5V15.5H2.5Z" fill="url(#gFold)" stroke="#e8c34e" stroke-width="1"/><path d="M12.5 15V10.5Q12.5 9.5 13.5 9.5H14.5" fill="none" stroke="#e8c34e" stroke-width="1"/><path d="M13 10H14V15H13Z" fill="#fbe9a8"/></svg>
<div class="t " style="left:613.4px;top:390px;letter-spacing:-0.192px;">MAGIX Downloads</div>
<div class="t " style="left:853.2px;top:390px;letter-spacing:-0.277px;color:#6d6d6d;">3/24/2022 8:08 PM</div>
<div class="t " style="left:973.4px;top:390px;letter-spacing:-0.126px;color:#6d6d6d;">File folder</div>
<svg class="a" style="left:593px;top:409px" width="16" height="16" viewBox="0 0 16 16"><path d="M2.5 .5H13.5V8.5H14.5V15.5H2.5Z" fill="url(#gFold)" stroke="#e8c34e" stroke-width="1"/><path d="M12.5 15V10.5Q12.5 9.5 13.5 9.5H14.5" fill="none" stroke="#e8c34e" stroke-width="1"/><path d="M13 10H14V15H13Z" fill="#fbe9a8"/></svg>
<div class="t " style="left:613.4px;top:411px;letter-spacing:-0.278px;">MyWebPages</div>
<div class="t " style="left:853.2px;top:411px;letter-spacing:-0.265px;color:#6d6d6d;">3/9/2020 1:41 PM</div>
<div class="t " style="left:973.4px;top:411px;letter-spacing:-0.126px;color:#6d6d6d;">File folder</div>
<svg class="a" style="left:593px;top:430px" width="16" height="16" viewBox="0 0 16 16"><path d="M2.5 .5H13.5V8.5H14.5V15.5H2.5Z" fill="url(#gFold)" stroke="#e8c34e" stroke-width="1"/><path d="M12.5 15V10.5Q12.5 9.5 13.5 9.5H14.5" fill="none" stroke="#e8c34e" stroke-width="1"/><path d="M13 10H14V15H13Z" fill="#fbe9a8"/></svg>
<div class="t " style="left:613.4px;top:432px;letter-spacing:-0.091px;">Sound recordings</div>
<div class="t " style="left:853.2px;top:432px;letter-spacing:-0.277px;color:#6d6d6d;">7/20/2022 8:00 PM</div>
<div class="t " style="left:973.4px;top:432px;letter-spacing:-0.126px;color:#6d6d6d;">File folder</div>
<svg class="a" style="left:593px;top:451px" width="16" height="16" viewBox="0 0 16 16"><path d="M2.5 .5H13.5V8.5H14.5V15.5H2.5Z" fill="url(#gFold)" stroke="#e8c34e" stroke-width="1"/><path d="M12.5 15V10.5Q12.5 9.5 13.5 9.5H14.5" fill="none" stroke="#e8c34e" stroke-width="1"/><path d="M13 10H14V15H13Z" fill="#fbe9a8"/></svg>
<div class="t " style="left:613.4px;top:453px;letter-spacing:-0.145px;">Web Content Extractor Projects</div>
<div class="t " style="left:853.2px;top:453px;letter-spacing:-0.277px;color:#6d6d6d;">7/23/2022 8:25 PM</div>
<div class="t " style="left:973.4px;top:453px;letter-spacing:-0.126px;color:#6d6d6d;">File folder</div>
<div class="a" style="left:1343px;top:187px;width:16px;height:283px;background:#f0f0f0;"></div>
<div class="a" style="left:1343px;top:204px;width:15px;height:185px;background:#c2c3c4;"></div>
<svg class="a" style="left:1345.5px;top:193px" width="10" height="7" viewBox="0 0 10 7"><path d="M1 6L5 2L9 6" stroke="#4a4a4a" stroke-width="1.9" fill="none"/></svg>
<svg class="a" style="left:1345.5px;top:458.5px" width="10" height="7" viewBox="0 0 10 7"><path d="M1 1L5 5L9 1" stroke="#4a4a4a" stroke-width="1.9" fill="none"/></svg>
<div class="a" style="left:415px;top:470px;width:944px;height:151px;background:#f0f0f0;"></div>
<div class="t " style="left:481.8px;top:486px;letter-spacing:-0.332px;">File name:</div>
<div class="t " style="left:468.3px;top:511px;letter-spacing:-0.501px;">Save as type:</div>
<div class="t " style="left:492.3px;top:539px;letter-spacing:-0.086px;color:#8a8a8a;">Authors:</div>
<div class="a" style="left:540px;top:481px;width:812px;height:21px;border:1px solid #7a7a7a;background:#fff"></div>
<div class="t " style="left:546px;top:485px;letter-spacing:0.031px;">practice-3</div>
<svg class="a" style="left:1340px;top:489px" width="10" height="7" viewBox="0 0 10 7"><path d="M1 1L5 5L9 1" stroke="#444" stroke-width="1.1" fill="none"/></svg>
<div class="a" style="left:540px;top:506px;width:812px;height:22px;border:1px solid #0067c0;background:#cce4f7"></div>
<div class="a" style="left:541px;top:528px;width:812px;height:1px;background:#0067c0;"></div>
<div class="t " style="left:544.3px;top:511px;letter-spacing:-0.241px;">Plain Text</div>
<svg class="a" style="left:1340px;top:514px" width="10" height="7" viewBox="0 0 10 7"><path d="M1 1L5 5L9 1" stroke="#444" stroke-width="1.1" fill="none"/></svg>
<svg class="a" style="left:428px;top:596.5px" width="10" height="7" viewBox="0 0 10 7"><path d="M1 6L5 2L9 6" stroke="#444" stroke-width="1.8" fill="none"/></svg>
<div class="t " style="left:445.3px;top:593px;letter-spacing:-0.211px;">Hide Folders</div>
<svg class="a" style="left:1349px;top:611px" width="10" height="10" viewBox="0 0 10 10"><g fill="#b5b5b5"><rect x="7" y="1" width="2" height="2"/><rect x="4" y="4" width="2" height="2"/><rect x="7" y="4" width="2" height="2"/><rect x="1" y="7" width="2" height="2"/><rect x="4" y="7" width="2" height="2"/><rect x="7" y="7" width="2" height="2"/></g></svg>
<div id="lst">
<div style="top:1px;letter-spacing:0.071px;">Word Document</div>
<div style="top:16px;letter-spacing:0.000px;">Word Macro-Enabled Document</div>
<div style="top:31px;letter-spacing:-0.122px;">Word 97-2003 Document</div>
<div style="top:46px;letter-spacing:0.111px;">Word Template</div>
<div style="top:61px;letter-spacing:0.012px;">Word Macro-Enabled Template</div>
<div style="top:76px;letter-spacing:-0.097px;">Word 97-2003 Template</div>
<div style="top:90px;height:15px;background:#0078d7"></div>
<div style="top:91px;letter-spacing:-1.267px;color:#fff;">PDF</div>
<div style="top:106px;letter-spacing:-0.295px;">XPS Document</div>
<div style="top:121px;letter-spacing:-0.334px;">Single File Web Page</div>
<div style="top:136px;letter-spacing:-0.415px;">Web Page</div>
<div style="top:151px;letter-spacing:-0.289px;">Web Page, Filtered</div>
<div style="top:166px;letter-spacing:-0.136px;">Rich Text Format</div>
<div style="top:181px;letter-spacing:-0.161px;">Plain Text</div>
<div style="top:196px;letter-spacing:0.015px;">Word XML Document</div>
<div style="top:211px;letter-spacing:-0.135px;">Word 2003 XML Document</div>
<div style="top:226px;letter-spacing:-0.059px;">Strict Open XML Document</div>
<div style="top:241px;letter-spacing:0.007px;">OpenDocument Text</div>
<div style="top:256px;letter-spacing:-0.093px;">Works 6 - 9 Document</div>
</div>
</body></html>
